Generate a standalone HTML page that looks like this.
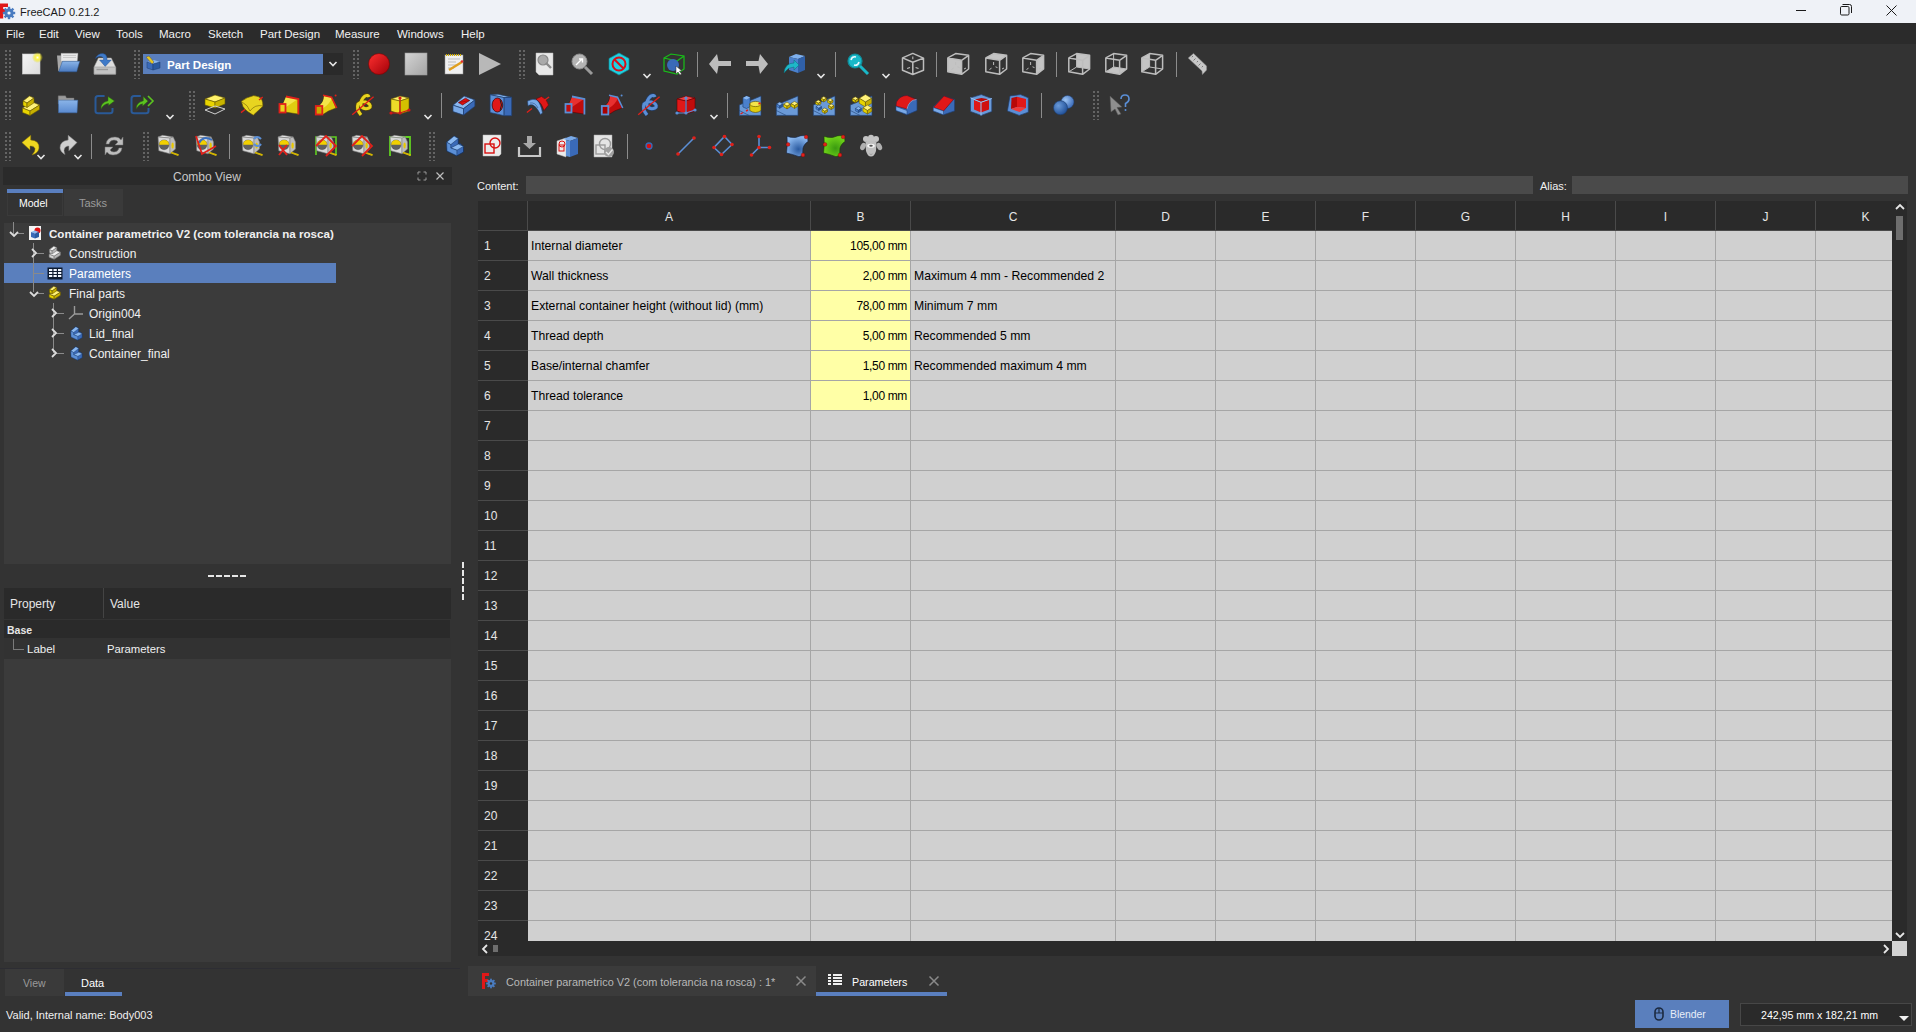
<!DOCTYPE html><html><head><meta charset="utf-8"><style>
html,body{margin:0;padding:0}
body{width:1916px;height:1032px;position:relative;overflow:hidden;background:#333333;font-family:"Liberation Sans", sans-serif}
div{position:absolute;box-sizing:border-box}
.t{white-space:nowrap;line-height:1}
svg{position:absolute;overflow:visible}
</style></head><body>
<div style="left:0px;top:0px;width:1916px;height:23px;background:#eff2f7;"></div>
<div class="t" style="left:20px;top:7px;font-size:11px;color:#1a1a1a;">FreeCAD 0.21.2</div>
<div style="left:0px;top:23px;width:1916px;height:21px;background:#2b2b2b;"></div>
<div class="t" style="left:6px;top:29px;font-size:11.5px;color:#f2f2f2;">File</div>
<div class="t" style="left:39px;top:29px;font-size:11.5px;color:#f2f2f2;">Edit</div>
<div class="t" style="left:75px;top:29px;font-size:11.5px;color:#f2f2f2;">View</div>
<div class="t" style="left:116px;top:29px;font-size:11.5px;color:#f2f2f2;">Tools</div>
<div class="t" style="left:159px;top:29px;font-size:11.5px;color:#f2f2f2;">Macro</div>
<div class="t" style="left:208px;top:29px;font-size:11.5px;color:#f2f2f2;">Sketch</div>
<div class="t" style="left:260px;top:29px;font-size:11.5px;color:#f2f2f2;">Part Design</div>
<div class="t" style="left:335px;top:29px;font-size:11.5px;color:#f2f2f2;">Measure</div>
<div class="t" style="left:397px;top:29px;font-size:11.5px;color:#f2f2f2;">Windows</div>
<div class="t" style="left:461px;top:29px;font-size:11.5px;color:#f2f2f2;">Help</div>
<div style="left:5px;top:50px;width:2px;height:2px;background:#646464;"></div>
<div style="left:9px;top:50px;width:2px;height:2px;background:#646464;"></div>
<div style="left:5px;top:54px;width:2px;height:2px;background:#646464;"></div>
<div style="left:9px;top:54px;width:2px;height:2px;background:#646464;"></div>
<div style="left:5px;top:58px;width:2px;height:2px;background:#646464;"></div>
<div style="left:9px;top:58px;width:2px;height:2px;background:#646464;"></div>
<div style="left:5px;top:62px;width:2px;height:2px;background:#646464;"></div>
<div style="left:9px;top:62px;width:2px;height:2px;background:#646464;"></div>
<div style="left:5px;top:66px;width:2px;height:2px;background:#646464;"></div>
<div style="left:9px;top:66px;width:2px;height:2px;background:#646464;"></div>
<div style="left:5px;top:70px;width:2px;height:2px;background:#646464;"></div>
<div style="left:9px;top:70px;width:2px;height:2px;background:#646464;"></div>
<div style="left:5px;top:74px;width:2px;height:2px;background:#646464;"></div>
<div style="left:9px;top:74px;width:2px;height:2px;background:#646464;"></div>
<div style="left:5px;top:78px;width:2px;height:1px;background:#646464;"></div>
<div style="left:9px;top:78px;width:2px;height:1px;background:#646464;"></div>
<div style="left:134px;top:50px;width:2px;height:2px;background:#646464;"></div>
<div style="left:138px;top:50px;width:2px;height:2px;background:#646464;"></div>
<div style="left:134px;top:54px;width:2px;height:2px;background:#646464;"></div>
<div style="left:138px;top:54px;width:2px;height:2px;background:#646464;"></div>
<div style="left:134px;top:58px;width:2px;height:2px;background:#646464;"></div>
<div style="left:138px;top:58px;width:2px;height:2px;background:#646464;"></div>
<div style="left:134px;top:62px;width:2px;height:2px;background:#646464;"></div>
<div style="left:138px;top:62px;width:2px;height:2px;background:#646464;"></div>
<div style="left:134px;top:66px;width:2px;height:2px;background:#646464;"></div>
<div style="left:138px;top:66px;width:2px;height:2px;background:#646464;"></div>
<div style="left:134px;top:70px;width:2px;height:2px;background:#646464;"></div>
<div style="left:138px;top:70px;width:2px;height:2px;background:#646464;"></div>
<div style="left:134px;top:74px;width:2px;height:2px;background:#646464;"></div>
<div style="left:138px;top:74px;width:2px;height:2px;background:#646464;"></div>
<div style="left:134px;top:78px;width:2px;height:1px;background:#646464;"></div>
<div style="left:138px;top:78px;width:2px;height:1px;background:#646464;"></div>
<div style="left:353px;top:50px;width:2px;height:2px;background:#646464;"></div>
<div style="left:357px;top:50px;width:2px;height:2px;background:#646464;"></div>
<div style="left:353px;top:54px;width:2px;height:2px;background:#646464;"></div>
<div style="left:357px;top:54px;width:2px;height:2px;background:#646464;"></div>
<div style="left:353px;top:58px;width:2px;height:2px;background:#646464;"></div>
<div style="left:357px;top:58px;width:2px;height:2px;background:#646464;"></div>
<div style="left:353px;top:62px;width:2px;height:2px;background:#646464;"></div>
<div style="left:357px;top:62px;width:2px;height:2px;background:#646464;"></div>
<div style="left:353px;top:66px;width:2px;height:2px;background:#646464;"></div>
<div style="left:357px;top:66px;width:2px;height:2px;background:#646464;"></div>
<div style="left:353px;top:70px;width:2px;height:2px;background:#646464;"></div>
<div style="left:357px;top:70px;width:2px;height:2px;background:#646464;"></div>
<div style="left:353px;top:74px;width:2px;height:2px;background:#646464;"></div>
<div style="left:357px;top:74px;width:2px;height:2px;background:#646464;"></div>
<div style="left:353px;top:78px;width:2px;height:1px;background:#646464;"></div>
<div style="left:357px;top:78px;width:2px;height:1px;background:#646464;"></div>
<div style="left:519px;top:50px;width:2px;height:2px;background:#646464;"></div>
<div style="left:523px;top:50px;width:2px;height:2px;background:#646464;"></div>
<div style="left:519px;top:54px;width:2px;height:2px;background:#646464;"></div>
<div style="left:523px;top:54px;width:2px;height:2px;background:#646464;"></div>
<div style="left:519px;top:58px;width:2px;height:2px;background:#646464;"></div>
<div style="left:523px;top:58px;width:2px;height:2px;background:#646464;"></div>
<div style="left:519px;top:62px;width:2px;height:2px;background:#646464;"></div>
<div style="left:523px;top:62px;width:2px;height:2px;background:#646464;"></div>
<div style="left:519px;top:66px;width:2px;height:2px;background:#646464;"></div>
<div style="left:523px;top:66px;width:2px;height:2px;background:#646464;"></div>
<div style="left:519px;top:70px;width:2px;height:2px;background:#646464;"></div>
<div style="left:523px;top:70px;width:2px;height:2px;background:#646464;"></div>
<div style="left:519px;top:74px;width:2px;height:2px;background:#646464;"></div>
<div style="left:523px;top:74px;width:2px;height:2px;background:#646464;"></div>
<div style="left:519px;top:78px;width:2px;height:1px;background:#646464;"></div>
<div style="left:523px;top:78px;width:2px;height:1px;background:#646464;"></div>
<div style="left:5px;top:91px;width:2px;height:2px;background:#646464;"></div>
<div style="left:9px;top:91px;width:2px;height:2px;background:#646464;"></div>
<div style="left:5px;top:95px;width:2px;height:2px;background:#646464;"></div>
<div style="left:9px;top:95px;width:2px;height:2px;background:#646464;"></div>
<div style="left:5px;top:99px;width:2px;height:2px;background:#646464;"></div>
<div style="left:9px;top:99px;width:2px;height:2px;background:#646464;"></div>
<div style="left:5px;top:103px;width:2px;height:2px;background:#646464;"></div>
<div style="left:9px;top:103px;width:2px;height:2px;background:#646464;"></div>
<div style="left:5px;top:107px;width:2px;height:2px;background:#646464;"></div>
<div style="left:9px;top:107px;width:2px;height:2px;background:#646464;"></div>
<div style="left:5px;top:111px;width:2px;height:2px;background:#646464;"></div>
<div style="left:9px;top:111px;width:2px;height:2px;background:#646464;"></div>
<div style="left:5px;top:115px;width:2px;height:2px;background:#646464;"></div>
<div style="left:9px;top:115px;width:2px;height:2px;background:#646464;"></div>
<div style="left:5px;top:119px;width:2px;height:1px;background:#646464;"></div>
<div style="left:9px;top:119px;width:2px;height:1px;background:#646464;"></div>
<div style="left:189px;top:91px;width:2px;height:2px;background:#646464;"></div>
<div style="left:193px;top:91px;width:2px;height:2px;background:#646464;"></div>
<div style="left:189px;top:95px;width:2px;height:2px;background:#646464;"></div>
<div style="left:193px;top:95px;width:2px;height:2px;background:#646464;"></div>
<div style="left:189px;top:99px;width:2px;height:2px;background:#646464;"></div>
<div style="left:193px;top:99px;width:2px;height:2px;background:#646464;"></div>
<div style="left:189px;top:103px;width:2px;height:2px;background:#646464;"></div>
<div style="left:193px;top:103px;width:2px;height:2px;background:#646464;"></div>
<div style="left:189px;top:107px;width:2px;height:2px;background:#646464;"></div>
<div style="left:193px;top:107px;width:2px;height:2px;background:#646464;"></div>
<div style="left:189px;top:111px;width:2px;height:2px;background:#646464;"></div>
<div style="left:193px;top:111px;width:2px;height:2px;background:#646464;"></div>
<div style="left:189px;top:115px;width:2px;height:2px;background:#646464;"></div>
<div style="left:193px;top:115px;width:2px;height:2px;background:#646464;"></div>
<div style="left:189px;top:119px;width:2px;height:1px;background:#646464;"></div>
<div style="left:193px;top:119px;width:2px;height:1px;background:#646464;"></div>
<div style="left:1093px;top:91px;width:2px;height:2px;background:#646464;"></div>
<div style="left:1097px;top:91px;width:2px;height:2px;background:#646464;"></div>
<div style="left:1093px;top:95px;width:2px;height:2px;background:#646464;"></div>
<div style="left:1097px;top:95px;width:2px;height:2px;background:#646464;"></div>
<div style="left:1093px;top:99px;width:2px;height:2px;background:#646464;"></div>
<div style="left:1097px;top:99px;width:2px;height:2px;background:#646464;"></div>
<div style="left:1093px;top:103px;width:2px;height:2px;background:#646464;"></div>
<div style="left:1097px;top:103px;width:2px;height:2px;background:#646464;"></div>
<div style="left:1093px;top:107px;width:2px;height:2px;background:#646464;"></div>
<div style="left:1097px;top:107px;width:2px;height:2px;background:#646464;"></div>
<div style="left:1093px;top:111px;width:2px;height:2px;background:#646464;"></div>
<div style="left:1097px;top:111px;width:2px;height:2px;background:#646464;"></div>
<div style="left:1093px;top:115px;width:2px;height:2px;background:#646464;"></div>
<div style="left:1097px;top:115px;width:2px;height:2px;background:#646464;"></div>
<div style="left:1093px;top:119px;width:2px;height:1px;background:#646464;"></div>
<div style="left:1097px;top:119px;width:2px;height:1px;background:#646464;"></div>
<div style="left:5px;top:132px;width:2px;height:2px;background:#646464;"></div>
<div style="left:9px;top:132px;width:2px;height:2px;background:#646464;"></div>
<div style="left:5px;top:136px;width:2px;height:2px;background:#646464;"></div>
<div style="left:9px;top:136px;width:2px;height:2px;background:#646464;"></div>
<div style="left:5px;top:140px;width:2px;height:2px;background:#646464;"></div>
<div style="left:9px;top:140px;width:2px;height:2px;background:#646464;"></div>
<div style="left:5px;top:144px;width:2px;height:2px;background:#646464;"></div>
<div style="left:9px;top:144px;width:2px;height:2px;background:#646464;"></div>
<div style="left:5px;top:148px;width:2px;height:2px;background:#646464;"></div>
<div style="left:9px;top:148px;width:2px;height:2px;background:#646464;"></div>
<div style="left:5px;top:152px;width:2px;height:2px;background:#646464;"></div>
<div style="left:9px;top:152px;width:2px;height:2px;background:#646464;"></div>
<div style="left:5px;top:156px;width:2px;height:2px;background:#646464;"></div>
<div style="left:9px;top:156px;width:2px;height:2px;background:#646464;"></div>
<div style="left:5px;top:160px;width:2px;height:1px;background:#646464;"></div>
<div style="left:9px;top:160px;width:2px;height:1px;background:#646464;"></div>
<div style="left:143px;top:132px;width:2px;height:2px;background:#646464;"></div>
<div style="left:147px;top:132px;width:2px;height:2px;background:#646464;"></div>
<div style="left:143px;top:136px;width:2px;height:2px;background:#646464;"></div>
<div style="left:147px;top:136px;width:2px;height:2px;background:#646464;"></div>
<div style="left:143px;top:140px;width:2px;height:2px;background:#646464;"></div>
<div style="left:147px;top:140px;width:2px;height:2px;background:#646464;"></div>
<div style="left:143px;top:144px;width:2px;height:2px;background:#646464;"></div>
<div style="left:147px;top:144px;width:2px;height:2px;background:#646464;"></div>
<div style="left:143px;top:148px;width:2px;height:2px;background:#646464;"></div>
<div style="left:147px;top:148px;width:2px;height:2px;background:#646464;"></div>
<div style="left:143px;top:152px;width:2px;height:2px;background:#646464;"></div>
<div style="left:147px;top:152px;width:2px;height:2px;background:#646464;"></div>
<div style="left:143px;top:156px;width:2px;height:2px;background:#646464;"></div>
<div style="left:147px;top:156px;width:2px;height:2px;background:#646464;"></div>
<div style="left:143px;top:160px;width:2px;height:1px;background:#646464;"></div>
<div style="left:147px;top:160px;width:2px;height:1px;background:#646464;"></div>
<div style="left:429px;top:132px;width:2px;height:2px;background:#646464;"></div>
<div style="left:433px;top:132px;width:2px;height:2px;background:#646464;"></div>
<div style="left:429px;top:136px;width:2px;height:2px;background:#646464;"></div>
<div style="left:433px;top:136px;width:2px;height:2px;background:#646464;"></div>
<div style="left:429px;top:140px;width:2px;height:2px;background:#646464;"></div>
<div style="left:433px;top:140px;width:2px;height:2px;background:#646464;"></div>
<div style="left:429px;top:144px;width:2px;height:2px;background:#646464;"></div>
<div style="left:433px;top:144px;width:2px;height:2px;background:#646464;"></div>
<div style="left:429px;top:148px;width:2px;height:2px;background:#646464;"></div>
<div style="left:433px;top:148px;width:2px;height:2px;background:#646464;"></div>
<div style="left:429px;top:152px;width:2px;height:2px;background:#646464;"></div>
<div style="left:433px;top:152px;width:2px;height:2px;background:#646464;"></div>
<div style="left:429px;top:156px;width:2px;height:2px;background:#646464;"></div>
<div style="left:433px;top:156px;width:2px;height:2px;background:#646464;"></div>
<div style="left:429px;top:160px;width:2px;height:1px;background:#646464;"></div>
<div style="left:433px;top:160px;width:2px;height:1px;background:#646464;"></div>
<div style="left:697px;top:52px;width:1px;height:25px;background:#8c8c8c;"></div>
<div style="left:835px;top:52px;width:1px;height:25px;background:#8c8c8c;"></div>
<div style="left:936px;top:52px;width:1px;height:25px;background:#8c8c8c;"></div>
<div style="left:1056px;top:52px;width:1px;height:25px;background:#8c8c8c;"></div>
<div style="left:1176px;top:52px;width:1px;height:25px;background:#8c8c8c;"></div>
<div style="left:441px;top:93px;width:1px;height:25px;background:#8c8c8c;"></div>
<div style="left:727px;top:93px;width:1px;height:25px;background:#8c8c8c;"></div>
<div style="left:884px;top:93px;width:1px;height:25px;background:#8c8c8c;"></div>
<div style="left:1041px;top:93px;width:1px;height:25px;background:#8c8c8c;"></div>
<div style="left:91px;top:134px;width:1px;height:25px;background:#8c8c8c;"></div>
<div style="left:229px;top:134px;width:1px;height:25px;background:#8c8c8c;"></div>
<svg style="left:642px;top:73px" width="10" height="6" viewBox="0 0 9 6"><path d="M1 1 L4.5 4.5 L8 1" fill="none" stroke="#e6e6e6" stroke-width="1.6"/></svg>
<svg style="left:816px;top:73px" width="10" height="6" viewBox="0 0 9 6"><path d="M1 1 L4.5 4.5 L8 1" fill="none" stroke="#e6e6e6" stroke-width="1.6"/></svg>
<svg style="left:881px;top:73px" width="10" height="6" viewBox="0 0 9 6"><path d="M1 1 L4.5 4.5 L8 1" fill="none" stroke="#e6e6e6" stroke-width="1.6"/></svg>
<svg style="left:165px;top:114px" width="10" height="6" viewBox="0 0 9 6"><path d="M1 1 L4.5 4.5 L8 1" fill="none" stroke="#e6e6e6" stroke-width="1.6"/></svg>
<svg style="left:423px;top:114px" width="10" height="6" viewBox="0 0 9 6"><path d="M1 1 L4.5 4.5 L8 1" fill="none" stroke="#e6e6e6" stroke-width="1.6"/></svg>
<svg style="left:709px;top:114px" width="10" height="6" viewBox="0 0 9 6"><path d="M1 1 L4.5 4.5 L8 1" fill="none" stroke="#e6e6e6" stroke-width="1.6"/></svg>
<svg style="left:36px;top:154px" width="10" height="6" viewBox="0 0 9 6"><path d="M1 1 L4.5 4.5 L8 1" fill="none" stroke="#e6e6e6" stroke-width="1.6"/></svg>
<svg style="left:73px;top:154px" width="10" height="6" viewBox="0 0 9 6"><path d="M1 1 L4.5 4.5 L8 1" fill="none" stroke="#e6e6e6" stroke-width="1.6"/></svg>
<svg style="left:22px;top:53px" width="22" height="22" viewBox="0 0 22 22"><defs><linearGradient id="ng" x1="0" y1="0" x2="1" y2="1"><stop offset="0" stop-color="#f4f4f4"/><stop offset="1" stop-color="#dcdcdc"/></linearGradient><radialGradient id="glw"><stop offset="0" stop-color="#ffffe8"/><stop offset=".35" stop-color="#fff44a"/><stop offset="1" stop-color="#e8e000" stop-opacity="0"/></radialGradient></defs><rect x="0.5" y="1" width="17.5" height="20" fill="url(#ng)" stroke="#cfcfcf" stroke-width=".6"/><circle cx="15.5" cy="4.5" r="5.5" fill="url(#glw)"/></svg>
<svg style="left:57px;top:53px" width="22" height="22" viewBox="0 0 22 22"><path d="M0 2.5 H5 V18 H1.3Z" fill="#a8a8a8"/><path d="M4 0.3 H21 L20.3 8.5 H4Z" fill="#e8e8e8" stroke="#9a9a9a" stroke-width=".4"/><path d="M6 2.5 H19 M6 4.5 H19" stroke="#c0c0c0" stroke-width=".8"/><defs><linearGradient id="og" x1="0" y1="0" x2="0" y2="1"><stop offset="0" stop-color="#8ab4e8"/><stop offset="1" stop-color="#4a7ac0"/></linearGradient></defs><path d="M5.4 8.3 H22.7 L19.7 18.8 H1.7Z" fill="url(#og)" stroke="#2d5a98" stroke-width=".5"/></svg>
<svg style="left:94px;top:53px" width="22" height="22" viewBox="0 0 22 22"><path d="M0 14 L4.4 4.9 H17.3 L21.7 14 V21.2 H0Z" fill="#dedede" stroke="#8a8a8a" stroke-width=".5"/><path d="M0 14 H21.7 V21.2 H0Z" fill="#c4c4c4" stroke="#8a8a8a" stroke-width=".5"/><path d="M2.5 16.5 H14" stroke="#9a9a9a" stroke-width="1.4"/><path d="M1.3 5.6 Q4 0.3 9 0.6 Q12.5 1 13 5 V7 H17.3 L11.2 13.4 L5.5 7 H9.5 V5.5 Q9 3 5 3.5 Q3 4 1.3 5.6Z" fill="#3f7ac8" stroke="#1f4a88" stroke-width=".4"/></svg>
<svg style="left:368px;top:53px" width="22" height="22" viewBox="0 0 22 22"><defs><linearGradient id="rg" x1="0" y1="0" x2="1" y2="1"><stop offset="0" stop-color="#ff3030"/><stop offset="1" stop-color="#a00008"/></linearGradient></defs><circle cx="11" cy="11" r="10.5" fill="url(#rg)" stroke="#7a0000" stroke-width=".6"/></svg>
<svg style="left:405px;top:53px" width="22" height="22" viewBox="0 0 22 22"><defs><linearGradient id="sg" x1="0" y1="0" x2="1" y2="1"><stop offset="0" stop-color="#d4d4d4"/><stop offset="1" stop-color="#a4a4a4"/></linearGradient></defs><rect x="0" y="0" width="22" height="22" fill="url(#sg)" stroke="#9a9a9a" stroke-width=".6"/></svg>
<svg style="left:443px;top:53px" width="22" height="22" viewBox="0 0 22 22"><rect x="2" y="2" width="18" height="19" fill="#f0f0f0" stroke="#999" stroke-width=".5"/><path d="M3 2 h16" stroke="#d4b000" stroke-width="2" stroke-dasharray="1 1"/><path d="M5 6 h12 M5 9 h8 M5 12 h8 M5 15 h6" stroke="#bbb" stroke-width="1"/><path d="M6 17 L19 9" stroke="#e0a020" stroke-width="2.4"/><circle cx="19" cy="8.5" r="1.3" fill="#e03030"/></svg>
<svg style="left:479px;top:53px" width="22" height="22" viewBox="0 0 22 22"><path d="M0 0 L22 11 L0 22Z" fill="#b8b8b8"/></svg>
<svg style="left:535px;top:53px" width="22" height="22" viewBox="0 0 22 22"><path d="M1 0 H18 V22 H4 L1 19Z" fill="#e8e8e8" stroke="#bbb" stroke-width=".5"/><circle cx="8" cy="7" r="5" fill="#aaa" stroke="#8a8a8a" stroke-width="1.2"/><path d="M11 10 L16 15" stroke="#8a8a8a" stroke-width="2.4"/></svg>
<svg style="left:571px;top:53px" width="22" height="22" viewBox="0 0 22 22"><circle cx="8.5" cy="8.5" r="7.5" fill="#b4b4b4" stroke="#8e8e8e" stroke-width="1"/><path d="M5 12 L11 6 M8 6 H11.5 V9.5" stroke="#fff" stroke-width="1.4" fill="none"/><path d="M14 14 L21 21" stroke="#9a9a9a" stroke-width="3"/></svg>
<svg style="left:608px;top:53px" width="22" height="22" viewBox="0 0 22 22"><path d="M11 0 L21 5.5 V16.5 L11 22 L1 16.5 V5.5Z" fill="#22d0e0" stroke="#0a8a9a" stroke-width=".7"/><circle cx="11" cy="11" r="6.5" fill="none" stroke="#d8101a" stroke-width="2"/><path d="M6.5 6.5 L15.5 15.5" stroke="#d8101a" stroke-width="2"/></svg>
<svg style="left:663px;top:53px" width="22" height="22" viewBox="0 0 22 22"><path d="M1 5 L8 1 L21 3 L21 16 L14 21 L1 18Z M1 5 L14 8 L21 3 M14 8 L14 21" fill="none" stroke="#18c018" stroke-width="1.2"/><circle cx="10" cy="12" r="6" fill="#3a6ab8"/><path d="M13 13 L13 21 L15 19 L17 22 L18.5 21 L16.5 18 L19 18Z" fill="#fff" stroke="#333" stroke-width=".5"/></svg>
<svg style="left:709px;top:53px" width="22" height="22" viewBox="0 0 22 22"><path d="M0 11 L8 1 L9.5 8 H22 V13 H9.5 L8 21Z" fill="#bdbdbd"/></svg>
<svg style="left:746px;top:53px" width="22" height="22" viewBox="0 0 22 22"><path d="M22 11 L14 1 L12.5 8 H0 V13 H12.5 L14 21Z" fill="#bdbdbd"/></svg>
<svg style="left:783px;top:53px" width="22" height="22" viewBox="0 0 22 22"><path d="M6 4 L13 1 L22 3 L15 6Z" fill="#7fb0ee"/><path d="M6 4 L15 6 V20 L6 17Z" fill="#4a80cc"/><path d="M15 6 L22 3 V17 L15 20Z" fill="#3060a8"/><path d="M1 20 Q2 10 11 10 V7 L16 12 L11 17 V14 Q5 14 1 20Z" fill="#1eb8c8" stroke="#0a6a78" stroke-width=".5"/></svg>
<svg style="left:847px;top:53px" width="22" height="22" viewBox="0 0 22 22"><circle cx="8" cy="8" r="7" fill="#19b8c8" stroke="#0e8b98" stroke-width="1.2"/><path d="M4 7 Q5 3 9 4 M12 9 Q11 13 7 12" stroke="#e8f8ff" stroke-width="1.6" fill="none"/><path d="M13 13 L21 21" stroke="#19b8c8" stroke-width="3"/></svg>
<svg style="left:902px;top:53px" width="22" height="22" viewBox="0 0 22 22"><path d="M10.8 0.4 L21.5 5.1 V17.2 L10.8 21.5 L0.5 17.2 V4.9Z M0.5 4.9 L10.8 9.3 L21.5 5.1 M10.8 9.3 V21.5" fill="none" stroke="#bdbdbd" stroke-width="1.5" stroke-linejoin="round"/><path d="M10.8 3.5 V6.3 M5.1 15.6 L8 14.4 M13.6 14.4 L16.5 15.6" stroke="#bdbdbd" stroke-width="1.1" fill="none"/></svg>
<svg style="left:947px;top:53px" width="22" height="22" viewBox="0 0 22 22"><path d="M0.8 4.9 L14.6 7.3 L14.6 21.3 L0.8 18.8Z" fill="#c4c4c4"/><path d="M0.8 4.9 L14.6 7.3 L14.6 21.3 L0.8 18.8Z M0.8 4.9 L8.6 0.6 L21.6 2.3 L14.6 7.3 M21.6 2.3 V16 L14.6 21.3" fill="none" stroke="#bdbdbd" stroke-width="1.5" stroke-linejoin="round"/><path d="M8.6 9 V12 M4.5 16.5 L6.5 15.2 M10.5 13.8 L12.5 14.6 M17 16 L19 15" stroke="#bdbdbd" stroke-width="1" fill="none"/></svg>
<svg style="left:985px;top:53px" width="22" height="22" viewBox="0 0 22 22"><path d="M0.8 4.9 L8.6 0.6 L21.6 2.3 L14.6 7.3Z" fill="#c4c4c4"/><path d="M0.8 4.9 L14.6 7.3 L14.6 21.3 L0.8 18.8Z M0.8 4.9 L8.6 0.6 L21.6 2.3 L14.6 7.3 M21.6 2.3 V16 L14.6 21.3" fill="none" stroke="#bdbdbd" stroke-width="1.5" stroke-linejoin="round"/><path d="M8.6 9 V12 M4.5 16.5 L6.5 15.2 M10.5 13.8 L12.5 14.6 M17 16 L19 15" stroke="#bdbdbd" stroke-width="1" fill="none"/></svg>
<svg style="left:1022px;top:53px" width="22" height="22" viewBox="0 0 22 22"><path d="M14.6 7.3 L21.6 2.3 L21.6 16 L14.6 21.3Z" fill="#c4c4c4"/><path d="M0.8 4.9 L14.6 7.3 L14.6 21.3 L0.8 18.8Z M0.8 4.9 L8.6 0.6 L21.6 2.3 L14.6 7.3 M21.6 2.3 V16 L14.6 21.3" fill="none" stroke="#bdbdbd" stroke-width="1.5" stroke-linejoin="round"/><path d="M8.6 9 V12 M4.5 16.5 L6.5 15.2 M10.5 13.8 L12.5 14.6 M17 16 L19 15" stroke="#bdbdbd" stroke-width="1" fill="none"/></svg>
<svg style="left:1068px;top:53px" width="22" height="22" viewBox="0 0 22 22"><path d="M8.6 0.6 L21.6 2.3 L21.6 16 L8.6 14Z" fill="#c4c4c4"/><path d="M0.8 4.9 L14.6 7.3 L14.6 21.3 L0.8 18.8Z M0.8 4.9 L8.6 0.6 L21.6 2.3 L14.6 7.3 M21.6 2.3 V16 L14.6 21.3" fill="none" stroke="#bdbdbd" stroke-width="1.5" stroke-linejoin="round"/><path d="M8.6 1 V14 L0.8 18.8 M8.6 14 L21.6 16" stroke="#bdbdbd" stroke-width="1" fill="none" stroke-dasharray="0"/></svg>
<svg style="left:1105px;top:53px" width="22" height="22" viewBox="0 0 22 22"><path d="M0.8 18.8 L8.6 14 L21.6 16 L14.6 21.3Z" fill="#c4c4c4"/><path d="M0.8 4.9 L14.6 7.3 L14.6 21.3 L0.8 18.8Z M0.8 4.9 L8.6 0.6 L21.6 2.3 L14.6 7.3 M21.6 2.3 V16 L14.6 21.3" fill="none" stroke="#bdbdbd" stroke-width="1.5" stroke-linejoin="round"/><path d="M8.6 1 V14 L0.8 18.8 M8.6 14 L21.6 16" stroke="#bdbdbd" stroke-width="1" fill="none" stroke-dasharray="0"/></svg>
<svg style="left:1141px;top:53px" width="22" height="22" viewBox="0 0 22 22"><path d="M0.8 4.9 L8.6 0.6 L8.6 14 L0.8 18.8Z" fill="#c4c4c4"/><path d="M0.8 4.9 L14.6 7.3 L14.6 21.3 L0.8 18.8Z M0.8 4.9 L8.6 0.6 L21.6 2.3 L14.6 7.3 M21.6 2.3 V16 L14.6 21.3" fill="none" stroke="#bdbdbd" stroke-width="1.5" stroke-linejoin="round"/><path d="M8.6 1 V14 L0.8 18.8 M8.6 14 L21.6 16" stroke="#bdbdbd" stroke-width="1" fill="none" stroke-dasharray="0"/></svg>
<svg style="left:1187px;top:53px" width="22" height="22" viewBox="0 0 22 22"><path d="M1.2 5.1 L6.5 0.4 L19.6 13 V17 L15.4 21.6 L15 18Z" fill="#c8c8c8" stroke="#8a8a8a" stroke-width=".5"/><path d="M6 3 l-1.2 1.2 M8.5 5.5 l-2 2 M11 8 l-1.2 1.2 M13.5 10.5 l-2 2 M16 13 l-1.2 1.2" stroke="#666" stroke-width=".8"/></svg>
<svg style="left:20px;top:94px" width="22" height="22" viewBox="0 0 22 22"><path d="M2.5 14 L12.5 8 L19.5 11 L10 17Z" fill="#fff27a" stroke="#6a5a00" stroke-width=".6"/><path d="M2.5 14 L10 17 V21.5 L2.5 18.5Z" fill="#e8d400" stroke="#6a5a00" stroke-width=".6"/><path d="M10 17 L19.5 11 V15.5 L10 21.5Z" fill="#c8b000" stroke="#6a5a00" stroke-width=".6"/><path d="M3 7 L9.5 2 L14 4 L7 9Z" fill="#fff27a" stroke="#6a5a00" stroke-width=".6"/><path d="M3 7 L7 9 V13.5 L3 11.5Z" fill="#e8d400" stroke="#6a5a00" stroke-width=".6"/><path d="M7 9 L14 4 V8.8 L7 13.5Z" fill="#c8b000" stroke="#6a5a00" stroke-width=".6"/></svg>
<svg style="left:57px;top:94px" width="22" height="22" viewBox="0 0 22 22"><path d="M1.2 1.8 H8.5 L9.5 4 H17 V10 H1.2Z" fill="#9a9a9a" stroke="#6a6a6a" stroke-width=".4"/><defs><linearGradient id="fg" x1="0" y1="0" x2="0" y2="1"><stop offset="0" stop-color="#8ab4e8"/><stop offset="1" stop-color="#5a8ad0"/></linearGradient></defs><path d="M1.5 6.2 H20.8 L20 18.8 H1.5Z" fill="url(#fg)" stroke="#3d6aa8" stroke-width=".5"/></svg>
<svg style="left:94px;top:94px" width="22" height="22" viewBox="0 0 22 22"><path d="M10.6 2 H4 Q1.5 2 1.5 4.5 V17 Q1.5 19.3 4 19.3 H16 Q18.5 19.3 18.5 17 V14" fill="none" stroke="#2a5a98" stroke-width="2"/><path d="M7.1 15 Q6 9 14 6.8 V2.5 L20.5 7 L14.5 11.5 V9.5 Q9.5 10 7.1 15Z" fill="#5cc420" stroke="#2a6010" stroke-width=".5"/></svg>
<svg style="left:131px;top:94px" width="22" height="22" viewBox="0 0 22 22"><path d="M9.8 2 H3 Q0.5 2 0.5 4.5 V17 Q0.5 19.3 3 19.3 H15 Q17.5 19.3 17.5 17 V14" fill="none" stroke="#2a5a98" stroke-width="2"/><path d="M5.4 15 Q4.5 9 12.3 6.8 V2.5 L17 7.2 L11.5 12 V9.8 Q7.5 10.5 5.4 15Z" fill="#5cc420" stroke="#2a6010" stroke-width=".5"/><path d="M17 2 L22 7 L17 12" fill="none" stroke="#5cc420" stroke-width="1.6"/></svg>
<svg style="left:204px;top:94px" width="22" height="22" viewBox="0 0 22 22"><path d="M1 5 L11 1 L21 4 L11 8Z" fill="#fff26a" stroke="#6a5a00" stroke-width=".6"/><path d="M1 5 L11 8 V14 L1 11Z" fill="#e8d400" stroke="#6a5a00" stroke-width=".6"/><path d="M11 8 L21 4 V10 L11 14Z" fill="#c8b400" stroke="#6a5a00" stroke-width=".6"/><path d="M1 16 L11 12 L21 15 L11 20Z" fill="none" stroke="#d0d0d0" stroke-width="1"/></svg>
<svg style="left:241px;top:94px" width="22" height="22" viewBox="0 0 22 22"><path d="M0.3 7.3 Q6 3 12.7 1.6 Q18 2 20.6 5 Q22 8 22 12.2 L12.3 21.2 L7 17.8 Q3 15 1.8 12.2 Z" fill="#e8d420" stroke="#5a4a00" stroke-width=".6"/><path d="M1 8 Q7 11 9 17 M9 17 Q14 10 22 12" fill="none" stroke="#5a4a00" stroke-width=".5"/><path d="M0 18.6 L4 15.5 M18 6 L21.7 3.1" stroke="#e0201a" stroke-width="1.4"/></svg>
<svg style="left:278px;top:94px" width="22" height="22" viewBox="0 0 22 22"><path d="M5 10 L8 3 L20 5 L20 20 L7 18Z" fill="#e0cc10" stroke="#5a4a00" stroke-width=".5"/><path d="M5 10 L8 3 L20 5 L8 13Z" fill="#f4e44a"/><rect x="1.5" y="10" width="6" height="8.5" fill="#e8d420" stroke="#e0201a" stroke-width="1.8"/><path d="M8 2.5 L20.4 5 V20.5" fill="none" stroke="#e0201a" stroke-width="1.8"/></svg>
<svg style="left:315px;top:94px" width="22" height="22" viewBox="0 0 22 22"><path d="M4 12 Q9 8 9 2 L17 3.5 L21 14 Q14 16 7 21Z" fill="#e0cc10" stroke="#5a4a00" stroke-width=".5"/><path d="M4 12 Q9 8 9 2 L17 3.5 Q15 10 7 15Z" fill="#f4e44a"/><rect x="0.8" y="12" width="6.5" height="8.5" fill="#c8a800" stroke="#e0201a" stroke-width="1.8"/><path d="M8 1.3 L16.5 3.1 L21.7 14" fill="none" stroke="#e0201a" stroke-width="1.6"/><circle cx="20.6" cy="1.6" r="1" fill="#e0201a"/></svg>
<svg style="left:352px;top:94px" width="22" height="22" viewBox="0 0 22 22"><path d="M9 21 Q4 15 6 10 Q10 6 16 9 Q20 12 17 14 Q12 16 9 12 Q8 6 13 2 Q16 0.5 17 3" fill="none" stroke="#5a4a00" stroke-width="4.2"/><path d="M9 21 Q4 15 6 10 Q10 6 16 9 Q20 12 17 14 Q12 16 9 12 Q8 6 13 2 Q16 0.5 17 3" fill="none" stroke="#e8d420" stroke-width="3"/><path d="M0.2 20.8 L21.6 2.8" stroke="#e0201a" stroke-width="1.4"/></svg>
<svg style="left:389px;top:94px" width="22" height="22" viewBox="0 0 22 22"><path d="M2 5 L11 2 L20 4 L11 7Z" fill="#fff26a" stroke="#6a5a00" stroke-width=".6"/><path d="M2 5 L11 7 V20 L2 17Z" fill="#eedc28" stroke="#6a5a00" stroke-width=".6"/><path d="M11 7 L20 4 V17 L11 20Z" fill="#d4c000" stroke="#6a5a00" stroke-width=".6"/><path d="M11 4 V19 M2 19 L11 19 L20 16" stroke="#d01818" stroke-width="1.2" fill="none"/><circle cx="11" cy="4" r="1.6" fill="#d01818"/><circle cx="2" cy="19" r="1.6" fill="#d01818"/><circle cx="11" cy="19" r="1.6" fill="#d01818"/><circle cx="20" cy="16" r="1.6" fill="#d01818"/></svg>
<svg style="left:452px;top:94px" width="22" height="22" viewBox="0 0 22 22"><path d="M1 11.2 L12.1 2.1 L22.9 5.9 L11.5 14.7Z" fill="#8ab8f0" stroke="#1f3f70" stroke-width=".7"/><path d="M1 11.2 L11.5 14.7 V21.1 L1 17.6Z" fill="#7aaae8" stroke="#1f3f70" stroke-width=".7"/><path d="M11.5 14.7 L22.9 5.9 V12.3 L11.5 21.1Z" fill="#3a6ab8" stroke="#1f3f70" stroke-width=".7"/><path d="M6.5 8.6 L13.5 4.2 L17.6 6.5 L10.6 10.9Z" fill="#e01010" stroke="#500" stroke-width=".6"/><path d="M6.5 8.6 L17.6 6.5" stroke="#800" stroke-width=".5"/></svg>
<svg style="left:490px;top:94px" width="22" height="22" viewBox="0 0 22 22"><path d="M0.1 0.7 L8 0.2 L21.7 3.3 L14.1 3.6Z" fill="#8ab8f0" stroke="#1f3f70" stroke-width=".6"/><path d="M0.1 0.7 L14.1 3.6 V21.7 L0.1 18.5Z" fill="#5b8fd6" stroke="#1f3f70" stroke-width=".7"/><path d="M14.1 3.6 L21.7 3.3 V21.7 H14.1Z" fill="#3a6ab8" stroke="#1f3f70" stroke-width=".7"/><ellipse cx="7.4" cy="11" rx="5.3" ry="7" fill="#e01818" stroke="#300" stroke-width=".7"/><path d="M10 5.5 Q13 11 10 16.5" fill="none" stroke="#222" stroke-width="1"/></svg>
<svg style="left:527px;top:94px" width="22" height="22" viewBox="0 0 22 22"><path d="M0.5 7.1 Q6 4 10 6 Q14 10 15.5 19 L13.5 20.5 Q10 13 6 11 Q3 10 1 12Z" fill="#7aaae8" stroke="#1f3f70" stroke-width=".6"/><path d="M3 9 Q8 8 11 14" fill="none" stroke="#1f3f70" stroke-width=".5"/><path d="M9 5 L14.5 2.5 Q20 5 21.5 11 L17 16.5 Q15 9 9 5Z" fill="#e01818" stroke="#600" stroke-width=".5"/><path d="M-0.1 18.5 L5 14.5 M17 6.5 L22.1 3" stroke="#e0201a" stroke-width="1.4"/></svg>
<svg style="left:564px;top:94px" width="22" height="22" viewBox="0 0 22 22"><path d="M5 10 L8 3 L20 5 L20 20 L7 18Z" fill="#c00c0c" stroke="#500" stroke-width=".5"/><path d="M5 10 L8 3 L20 5 L8 13Z" fill="#e83030"/><rect x="1.5" y="10" width="6" height="8.5" fill="#c00c0c" stroke="#5b8fd6" stroke-width="1.8"/><path d="M8 2.5 L20.4 5 V20.5" fill="none" stroke="#5b8fd6" stroke-width="1.8"/></svg>
<svg style="left:601px;top:94px" width="22" height="22" viewBox="0 0 22 22"><path d="M4 12 Q9 8 9 2 L17 3.5 L21 14 Q14 16 7 21Z" fill="#c00c0c" stroke="#500" stroke-width=".5"/><path d="M4 12 Q9 8 9 2 L17 3.5 Q15 10 7 15Z" fill="#e83030"/><rect x="0.8" y="12" width="6.5" height="8.5" fill="#a00" stroke="#5b8fd6" stroke-width="1.8"/><path d="M8 1.3 L16.5 3.1 L21.7 14" fill="none" stroke="#5b8fd6" stroke-width="1.6"/><circle cx="20.6" cy="1.6" r="1" fill="#5b8fd6"/></svg>
<svg style="left:638px;top:94px" width="22" height="22" viewBox="0 0 22 22"><path d="M9 21 Q4 15 6 10 Q10 6 16 9 Q20 12 17 14 Q12 16 9 12 Q8 6 13 2 Q16 0.5 17 3" fill="none" stroke="#1f3f70" stroke-width="4.2"/><path d="M9 21 Q4 15 6 10 Q10 6 16 9 Q20 12 17 14 Q12 16 9 12 Q8 6 13 2 Q16 0.5 17 3" fill="none" stroke="#5b8fd6" stroke-width="3"/><path d="M0.2 20.8 L21.6 2.8" stroke="#e0201a" stroke-width="1.4"/></svg>
<svg style="left:675px;top:94px" width="22" height="22" viewBox="0 0 22 22"><path d="M2 5 L11 2 L20 4 L11 7Z" fill="#f04040" stroke="#600" stroke-width=".6"/><path d="M2 5 L11 7 V20 L2 17Z" fill="#e01818" stroke="#600" stroke-width=".6"/><path d="M11 7 L20 4 V17 L11 20Z" fill="#c00c0c" stroke="#600" stroke-width=".6"/><path d="M11 4 V19 M2 19 L11 19 L20 16" stroke="#5b8fd6" stroke-width="1.2" fill="none"/><circle cx="11" cy="4" r="1.6" fill="#5b8fd6"/><circle cx="2" cy="19" r="1.6" fill="#5b8fd6"/><circle cx="11" cy="19" r="1.6" fill="#5b8fd6"/><circle cx="20" cy="16" r="1.6" fill="#5b8fd6"/></svg>
<svg style="left:739px;top:94px" width="22" height="22" viewBox="0 0 22 22"><path d="M0.3 11 L22 2 V21.4 H0.3Z" fill="#6a9ad8" stroke="#1f3f70" stroke-width=".7"/><path d="M0.3 16.5 L10 21.4" stroke="#1f3f70" stroke-width=".6"/><path d="M3.9 4 L7.5 2 L11.1 3.5 V12.5 L7.5 14.5 L3.9 13Z" fill="#4a80cc" stroke="#1f3f70" stroke-width=".6"/><path d="M3.9 4 L7.5 2 L11.1 3.5 L7.5 5.5Z" fill="#8ab8f0"/><path d="M10.8 10 V16.5 Q16.5 20.5 22 16.5 V10Z" fill="#e0cc10" stroke="#5a4a00" stroke-width=".6"/><ellipse cx="16.4" cy="10" rx="5.6" ry="2.6" fill="#f4e44a" stroke="#5a4a00" stroke-width=".6"/><path d="M1.5 20 L4 18.5 M7 17 L9 16 M19.5 10 L21.5 9" stroke="#e0201a" stroke-width="1.4"/></svg>
<svg style="left:776px;top:94px" width="22" height="22" viewBox="0 0 22 22"><path d="M0.3 11 L22 2 V21.4 H0.3Z" fill="#6a9ad8" stroke="#1f3f70" stroke-width=".7"/><path d="M0.3 16.5 L10 21.4" stroke="#1f3f70" stroke-width=".6"/><path d="M0.6 9.959999999999999 L3.7 8.1 L6.8 9.959999999999999 L3.7 11.82Z" fill="#8ab8f0" stroke="#1f3f70" stroke-width=".5"/><path d="M0.6 9.959999999999999 L3.7 11.82 V14.3 L0.6 12.440000000000001Z" fill="#4a80cc" stroke="#1f3f70" stroke-width=".5"/><path d="M3.7 11.82 L6.8 9.959999999999999 V12.440000000000001 L3.7 14.3Z" fill="#2a5aa0" stroke="#1f3f70" stroke-width=".5"/><path d="M7.6 10.14 L11.0 8.1 L14.399999999999999 10.14 L11.0 12.18Z" fill="#fff27a" stroke="#5a4a00" stroke-width=".5"/><path d="M7.6 10.14 L11.0 12.18 V14.899999999999999 L7.6 12.86Z" fill="#e8d400" stroke="#5a4a00" stroke-width=".5"/><path d="M11.0 12.18 L14.399999999999999 10.14 V12.86 L11.0 14.899999999999999Z" fill="#c8b000" stroke="#5a4a00" stroke-width=".5"/><path d="M15 9.5 L18.5 7.4 L22 9.5 L18.5 11.600000000000001Z" fill="#fff27a" stroke="#5a4a00" stroke-width=".5"/><path d="M15 9.5 L18.5 11.600000000000001 V14.4 L15 12.3Z" fill="#e8d400" stroke="#5a4a00" stroke-width=".5"/><path d="M18.5 11.600000000000001 L22 9.5 V12.3 L18.5 14.4Z" fill="#c8b000" stroke="#5a4a00" stroke-width=".5"/></svg>
<svg style="left:813px;top:94px" width="22" height="22" viewBox="0 0 22 22"><path d="M0.3 11 L22 2 V21.4 H0.3Z" fill="#6a9ad8" stroke="#1f3f70" stroke-width=".7"/><path d="M0.3 16.5 L10 21.4" stroke="#1f3f70" stroke-width=".6"/><path d="M2.5 7.65 L5.25 6 L8.0 7.65 L5.25 9.3Z" fill="#fff27a" stroke="#5a4a00" stroke-width=".5"/><path d="M2.5 7.65 L5.25 9.3 V11.5 L2.5 9.85Z" fill="#e8d400" stroke="#5a4a00" stroke-width=".5"/><path d="M5.25 9.3 L8.0 7.65 V9.85 L5.25 11.5Z" fill="#c8b000" stroke="#5a4a00" stroke-width=".5"/><path d="M8 4.15 L10.75 2.5 L13.5 4.15 L10.75 5.8Z" fill="#fff27a" stroke="#5a4a00" stroke-width=".5"/><path d="M8 4.15 L10.75 5.8 V8.0 L8 6.35Z" fill="#e8d400" stroke="#5a4a00" stroke-width=".5"/><path d="M10.75 5.8 L13.5 4.15 V6.35 L10.75 8.0Z" fill="#c8b000" stroke="#5a4a00" stroke-width=".5"/><path d="M14.5 6.15 L17.25 4.5 L20.0 6.15 L17.25 7.8Z" fill="#fff27a" stroke="#5a4a00" stroke-width=".5"/><path d="M14.5 6.15 L17.25 7.8 V10.0 L14.5 8.35Z" fill="#e8d400" stroke="#5a4a00" stroke-width=".5"/><path d="M17.25 7.8 L20.0 6.15 V8.35 L17.25 10.0Z" fill="#c8b000" stroke="#5a4a00" stroke-width=".5"/><path d="M15.5 11.65 L18.25 10 L21.0 11.65 L18.25 13.3Z" fill="#fff27a" stroke="#5a4a00" stroke-width=".5"/><path d="M15.5 11.65 L18.25 13.3 V15.5 L15.5 13.85Z" fill="#e8d400" stroke="#5a4a00" stroke-width=".5"/><path d="M18.25 13.3 L21.0 11.65 V13.85 L18.25 15.5Z" fill="#c8b000" stroke="#5a4a00" stroke-width=".5"/><path d="M9 15.65 L11.75 14 L14.5 15.65 L11.75 17.3Z" fill="#fff27a" stroke="#5a4a00" stroke-width=".5"/><path d="M9 15.65 L11.75 17.3 V19.5 L9 17.85Z" fill="#e8d400" stroke="#5a4a00" stroke-width=".5"/><path d="M11.75 17.3 L14.5 15.65 V17.85 L11.75 19.5Z" fill="#c8b000" stroke="#5a4a00" stroke-width=".5"/><path d="M3 12.65 L5.75 11 L8.5 12.65 L5.75 14.3Z" fill="#8ab8f0" stroke="#1f3f70" stroke-width=".5"/><path d="M3 12.65 L5.75 14.3 V16.5 L3 14.85Z" fill="#4a80cc" stroke="#1f3f70" stroke-width=".5"/><path d="M5.75 14.3 L8.5 12.65 V14.85 L5.75 16.5Z" fill="#2a5aa0" stroke="#1f3f70" stroke-width=".5"/></svg>
<svg style="left:850px;top:94px" width="22" height="22" viewBox="0 0 22 22"><path d="M0.3 11 L22 2 V21.4 H0.3Z" fill="#6a9ad8" stroke="#1f3f70" stroke-width=".7"/><path d="M0.3 16.5 L10 21.4" stroke="#1f3f70" stroke-width=".6"/><path d="M2.3 4.6 L5.3 2.8 L8.3 4.6 L5.3 6.3999999999999995Z" fill="#fff27a" stroke="#5a4a00" stroke-width=".5"/><path d="M2.3 4.6 L5.3 6.3999999999999995 V8.8 L2.3 7.000000000000001Z" fill="#e8d400" stroke="#5a4a00" stroke-width=".5"/><path d="M5.3 6.3999999999999995 L8.3 4.6 V7.000000000000001 L5.3 8.8Z" fill="#c8b000" stroke="#5a4a00" stroke-width=".5"/><path d="M9.2 4.25 L15.45 0.5 L21.7 4.25 L15.45 8.0Z" fill="#fff27a" stroke="#5a4a00" stroke-width=".5"/><path d="M9.2 4.25 L15.45 8.0 V13.0 L9.2 9.25Z" fill="#e8d400" stroke="#5a4a00" stroke-width=".5"/><path d="M15.45 8.0 L21.7 4.25 V9.25 L15.45 13.0Z" fill="#c8b000" stroke="#5a4a00" stroke-width=".5"/><path d="M5.4 14.399999999999999 L8.4 12.6 L11.4 14.399999999999999 L8.4 16.2Z" fill="#8ab8f0" stroke="#1f3f70" stroke-width=".5"/><path d="M5.4 14.399999999999999 L8.4 16.2 V18.6 L5.4 16.8Z" fill="#4a80cc" stroke="#1f3f70" stroke-width=".5"/><path d="M8.4 16.2 L11.4 14.399999999999999 V16.8 L8.4 18.6Z" fill="#2a5aa0" stroke="#1f3f70" stroke-width=".5"/><path d="M12.9 13.799999999999999 L17.4 11.1 L21.9 13.799999999999999 L17.4 16.5Z" fill="#fff27a" stroke="#5a4a00" stroke-width=".5"/><path d="M12.9 13.799999999999999 L17.4 16.5 V20.1 L12.9 17.400000000000002Z" fill="#e8d400" stroke="#5a4a00" stroke-width=".5"/><path d="M17.4 16.5 L21.9 13.799999999999999 V17.400000000000002 L17.4 20.1Z" fill="#c8b000" stroke="#5a4a00" stroke-width=".5"/></svg>
<svg style="left:895px;top:94px" width="22" height="22" viewBox="0 0 22 22"><path d="M1 12 L1 16.5 L12 20.8 L22 16.5 L22 6 L12 1.5 Q5 1.5 1.5 8Z" fill="#3a6ab8" stroke="#1f3f70" stroke-width=".7"/><path d="M1.5 8 Q5 1.5 12 1.5 L21.5 5.5 Q14 6 12 15 L1 12Z" fill="#e01818" stroke="#600" stroke-width=".5"/><path d="M12 15 Q14 6 21.5 5.5" fill="none" stroke="#8ab8f0" stroke-width=".8"/><path d="M1 12.5 L12 16.5 L12 20.5 L1 16.5Z" fill="#7aaae8" stroke="#1f3f70" stroke-width=".5"/></svg>
<svg style="left:933px;top:94px" width="22" height="22" viewBox="0 0 22 22"><path d="M0.3 13 L0.3 16.9 L10.5 20.8 L21.6 16.9 L21.6 5.5 L11 1.9Z" fill="#3a6ab8" stroke="#1f3f70" stroke-width=".7"/><path d="M0.5 13.5 L11 2 L20.5 5.5 L10.5 17Z" fill="#e01818" stroke="#600" stroke-width=".5"/><path d="M0.3 13.5 L10.5 17 L10.5 20.8 L0.3 16.9Z" fill="#7aaae8" stroke="#1f3f70" stroke-width=".5"/></svg>
<svg style="left:970px;top:94px" width="22" height="22" viewBox="0 0 22 22"><path d="M11.3 0.6 L21.8 4.5 V17.5 L11.3 21.4 L0.5 17.5 V3.8Z" fill="#6a9ad8" stroke="#1f3f70" stroke-width=".7"/><path d="M4 6 L11 8.5 V18.5 L4 15.5Z" fill="#e01818"/><path d="M11 8.5 L19 5.5 V15.5 L11 18.5Z" fill="#d01010"/><path d="M4.5 5.5 L11.5 4 L18.5 5.3 L11 8Z" fill="#b80808"/><path d="M0.5 3.8 L11 8.3 L21.8 4.5 M11 8.3 V21.4" fill="none" stroke="#9ac4f4" stroke-width="1"/></svg>
<svg style="left:1007px;top:94px" width="22" height="22" viewBox="0 0 22 22"><path d="M3 1.9 L13.5 0.6 L21.3 3.8 V18.2 L12.2 21.4 L0.4 16.9Z" fill="#5b8fd6" stroke="#1f3f70" stroke-width=".7"/><path d="M4.5 4 L10 2.8 V13 L4 15Z" fill="#b80808"/><path d="M10 2.8 L19 5 V14 L10 13Z" fill="#e01818"/><path d="M4 15 L10 13 L19 14 L12.5 18Z" fill="#f03a3a"/></svg>
<svg style="left:1053px;top:94px" width="22" height="22" viewBox="0 0 22 22"><defs><radialGradient id="bg1" cx=".35" cy=".35" r=".7"><stop offset="0" stop-color="#9cc4f4"/><stop offset="1" stop-color="#3a6ab8"/></radialGradient><radialGradient id="bg2" cx=".35" cy=".35" r=".7"><stop offset="0" stop-color="#6a9ad8"/><stop offset="1" stop-color="#1f4f98"/></radialGradient></defs><circle cx="14.5" cy="8" r="6.5" fill="url(#bg1)" stroke="#1f3f70" stroke-width=".5"/><circle cx="7.5" cy="13.8" r="7" fill="url(#bg2)" stroke="#1f3f70" stroke-width=".6"/></svg>
<svg style="left:1108px;top:94px" width="22" height="22" viewBox="0 0 22 22"><path d="M2 2 L14 13 L9 13.5 L13 20 L10 21 L7 15 L3 18Z" fill="#8e8e8e" stroke="#555" stroke-width=".5"/><path d="M13 5 Q13 1 17 1 Q21 1 21 5 Q21 8 17.5 9.5 V13" fill="none" stroke="#5b8fd6" stroke-width="1.6"/><circle cx="17.5" cy="16" r="1" fill="#5b8fd6"/></svg>
<svg style="left:21px;top:135px" width="22" height="22" viewBox="0 0 22 22"><path d="M0.9 7.5 L9.7 0.3 V5 Q18.5 5.5 18 13 Q17.5 18 11 20 Q14.5 16 14 13.5 Q13 10.5 9 11 V15Z" fill="#f0d820" stroke="#8a7400" stroke-width=".5"/></svg>
<svg style="left:58px;top:135px" width="22" height="22" viewBox="0 0 22 22"><path d="M19 7.5 L10.2 0.3 V5 Q2 6 2 13 Q2.5 17 7 19.5 Q5 15 7 12.5 Q9 10.5 10.9 11 V15.7Z" fill="#d0d0d0" stroke="#8a8a8a" stroke-width=".5"/></svg>
<svg style="left:103px;top:135px" width="22" height="22" viewBox="0 0 22 22"><path d="M3 9 Q4 2 12 2 Q16 2 18 5 L20 2 V10 H12 L15 7 Q14 5 11 5 Q7 5 6 9Z" fill="#bdbdbd" stroke="#777" stroke-width=".5"/><path d="M19 13 Q18 20 10 20 Q6 20 4 17 L2 20 V12 H10 L7 15 Q8 17 11 17 Q15 17 16 13Z" fill="#bdbdbd" stroke="#777" stroke-width=".5"/></svg>
<svg style="left:157px;top:135px" width="22" height="22" viewBox="0 0 22 22"><path d="M1.1 1.9 L5.5 0.3 L16.2 1.9 L13 3.1Z" fill="#e8e8e8" stroke="#7a7a7a" stroke-width=".5"/><path d="M1.1 1.9 L13 3.1 L13 18.8 L1.8 15.7Z" fill="#d8d8d8" stroke="#7a7a7a" stroke-width=".6"/><path d="M13 3.1 L16.2 1.9 L18.5 7 V14 L13 18.8Z" fill="#bcbcbc" stroke="#7a7a7a" stroke-width=".5"/><circle cx="7.1" cy="9.8" r="4.9" fill="#606060" stroke="#444" stroke-width=".4"/><path d="M2.2 9.8 A4.9 4.9 0 0 1 12 9.8Z" fill="#f2d000"/><ellipse cx="15.6" cy="10.4" rx="1.2" ry="3" fill="#e8c800"/><path d="M14 17.5 L21.5 20.2" stroke="#e8c800" stroke-width="1.8"/><path d="M14 17.5 L21.5 20.2" stroke="#8a7400" stroke-width=".3"/></svg>
<svg style="left:195px;top:135px" width="22" height="22" viewBox="0 0 22 22"><path d="M1.1 1.9 L5.5 0.3 L16.2 1.9 L13 3.1Z" fill="#e8e8e8" stroke="#7a7a7a" stroke-width=".5"/><path d="M1.1 1.9 L13 3.1 L13 18.8 L1.8 15.7Z" fill="#d8d8d8" stroke="#7a7a7a" stroke-width=".6"/><path d="M13 3.1 L16.2 1.9 L18.5 7 V14 L13 18.8Z" fill="#bcbcbc" stroke="#7a7a7a" stroke-width=".5"/><circle cx="7.1" cy="9.8" r="4.9" fill="#606060" stroke="#444" stroke-width=".4"/><path d="M2.2 9.8 A4.9 4.9 0 0 1 12 9.8Z" fill="#f2d000"/><ellipse cx="15.6" cy="10.4" rx="1.2" ry="3" fill="#e8c800"/><path d="M14 17.5 L21.5 20.2" stroke="#e8c800" stroke-width="1.8"/><path d="M14 17.5 L21.5 20.2" stroke="#8a7400" stroke-width=".3"/><path d="M4 8 Q8 0 17 5" fill="none" stroke="#3a70c0" stroke-width="2"/><path d="M1 1 L7 19 L21 11" fill="none" stroke="#e0201a" stroke-width="1.8"/></svg>
<svg style="left:241px;top:135px" width="22" height="22" viewBox="0 0 22 22"><path d="M1.1 1.9 L5.5 0.3 L16.2 1.9 L13 3.1Z" fill="#e8e8e8" stroke="#7a7a7a" stroke-width=".5"/><path d="M1.1 1.9 L13 3.1 L13 18.8 L1.8 15.7Z" fill="#d8d8d8" stroke="#7a7a7a" stroke-width=".6"/><path d="M13 3.1 L16.2 1.9 L18.5 7 V14 L13 18.8Z" fill="#bcbcbc" stroke="#7a7a7a" stroke-width=".5"/><circle cx="7.1" cy="9.8" r="4.9" fill="#606060" stroke="#444" stroke-width=".4"/><path d="M2.2 9.8 A4.9 4.9 0 0 1 12 9.8Z" fill="#f2d000"/><ellipse cx="15.6" cy="10.4" rx="1.2" ry="3" fill="#e8c800"/><path d="M14 17.5 L21.5 20.2" stroke="#e8c800" stroke-width="1.8"/><path d="M14 17.5 L21.5 20.2" stroke="#8a7400" stroke-width=".3"/><path d="M13 4 Q16 0 20 4 M20 9 Q17 13 13 9" fill="none" stroke="#5b8fd6" stroke-width="2.2"/></svg>
<svg style="left:277px;top:135px" width="22" height="22" viewBox="0 0 22 22"><path d="M1.1 1.9 L5.5 0.3 L16.2 1.9 L13 3.1Z" fill="#e8e8e8" stroke="#7a7a7a" stroke-width=".5"/><path d="M1.1 1.9 L13 3.1 L13 18.8 L1.8 15.7Z" fill="#d8d8d8" stroke="#7a7a7a" stroke-width=".6"/><path d="M13 3.1 L16.2 1.9 L18.5 7 V14 L13 18.8Z" fill="#bcbcbc" stroke="#7a7a7a" stroke-width=".5"/><circle cx="7.1" cy="9.8" r="4.9" fill="#606060" stroke="#444" stroke-width=".4"/><path d="M2.2 9.8 A4.9 4.9 0 0 1 12 9.8Z" fill="#f2d000"/><ellipse cx="15.6" cy="10.4" rx="1.2" ry="3" fill="#e8c800"/><path d="M14 17.5 L21.5 20.2" stroke="#e8c800" stroke-width="1.8"/><path d="M14 17.5 L21.5 20.2" stroke="#8a7400" stroke-width=".3"/><path d="M2 10 L10 20 M10 10 L2 20" stroke="#e0201a" stroke-width="2"/></svg>
<svg style="left:315px;top:135px" width="22" height="22" viewBox="0 0 22 22"><path d="M1 20 V2 H21 V20" fill="none" stroke="#60d020" stroke-width="1.6"/><path d="M1.1 1.9 L5.5 0.3 L16.2 1.9 L13 3.1Z" fill="#e8e8e8" stroke="#7a7a7a" stroke-width=".5"/><path d="M1.1 1.9 L13 3.1 L13 18.8 L1.8 15.7Z" fill="#d8d8d8" stroke="#7a7a7a" stroke-width=".6"/><path d="M13 3.1 L16.2 1.9 L18.5 7 V14 L13 18.8Z" fill="#bcbcbc" stroke="#7a7a7a" stroke-width=".5"/><circle cx="7.1" cy="9.8" r="4.9" fill="#606060" stroke="#444" stroke-width=".4"/><path d="M2.2 9.8 A4.9 4.9 0 0 1 12 9.8Z" fill="#f2d000"/><ellipse cx="15.6" cy="10.4" rx="1.2" ry="3" fill="#e8c800"/><path d="M14 17.5 L21.5 20.2" stroke="#e8c800" stroke-width="1.8"/><path d="M14 17.5 L21.5 20.2" stroke="#8a7400" stroke-width=".3"/><path d="M1 11 L11 1 L21 11 L11 21" fill="none" stroke="#e0201a" stroke-width="1.8"/></svg>
<svg style="left:351px;top:135px" width="22" height="22" viewBox="0 0 22 22"><path d="M1.1 1.9 L5.5 0.3 L16.2 1.9 L13 3.1Z" fill="#e8e8e8" stroke="#7a7a7a" stroke-width=".5"/><path d="M1.1 1.9 L13 3.1 L13 18.8 L1.8 15.7Z" fill="#d8d8d8" stroke="#7a7a7a" stroke-width=".6"/><path d="M13 3.1 L16.2 1.9 L18.5 7 V14 L13 18.8Z" fill="#bcbcbc" stroke="#7a7a7a" stroke-width=".5"/><circle cx="7.1" cy="9.8" r="4.9" fill="#606060" stroke="#444" stroke-width=".4"/><path d="M2.2 9.8 A4.9 4.9 0 0 1 12 9.8Z" fill="#f2d000"/><ellipse cx="15.6" cy="10.4" rx="1.2" ry="3" fill="#e8c800"/><path d="M14 17.5 L21.5 20.2" stroke="#e8c800" stroke-width="1.8"/><path d="M14 17.5 L21.5 20.2" stroke="#8a7400" stroke-width=".3"/><path d="M1 11 L11 1 L21 11 L11 21" fill="none" stroke="#e0201a" stroke-width="1.8"/></svg>
<svg style="left:389px;top:135px" width="22" height="22" viewBox="0 0 22 22"><path d="M1 21 V2 H21 V21" fill="none" stroke="#60d020" stroke-width="1.8"/><path d="M1.1 1.9 L5.5 0.3 L16.2 1.9 L13 3.1Z" fill="#e8e8e8" stroke="#7a7a7a" stroke-width=".5"/><path d="M1.1 1.9 L13 3.1 L13 18.8 L1.8 15.7Z" fill="#d8d8d8" stroke="#7a7a7a" stroke-width=".6"/><path d="M13 3.1 L16.2 1.9 L18.5 7 V14 L13 18.8Z" fill="#bcbcbc" stroke="#7a7a7a" stroke-width=".5"/><circle cx="7.1" cy="9.8" r="4.9" fill="#606060" stroke="#444" stroke-width=".4"/><path d="M2.2 9.8 A4.9 4.9 0 0 1 12 9.8Z" fill="#f2d000"/><ellipse cx="15.6" cy="10.4" rx="1.2" ry="3" fill="#e8c800"/><path d="M14 17.5 L21.5 20.2" stroke="#e8c800" stroke-width="1.8"/><path d="M14 17.5 L21.5 20.2" stroke="#8a7400" stroke-width=".3"/></svg>
<svg style="left:444px;top:135px" width="22" height="22" viewBox="0 0 22 22"><path d="M2.6 7.2 L10.1 1.1 L14.3 3.5 V9.1 L16.2 8.6 L19.5 11.4 V17.1 L12.9 20.8 L3 16.1Z" fill="#3a6ab8" stroke="#14305a" stroke-width=".8"/><path d="M2.6 7.2 L10.1 1.1 L14.3 3.5 L6.8 9.6Z" fill="#8ab8f0" stroke="#14305a" stroke-width=".5"/><path d="M6.8 13 L14.3 9.1 L19.5 11.4 L12.9 15.2Z" fill="#8ab8f0" stroke="#14305a" stroke-width=".5"/><path d="M2.6 7.2 L6.8 9.6 V13 L12.9 15.2 V20.8 L3 16.1Z" fill="#5b8fd6" stroke="#14305a" stroke-width=".5"/></svg>
<svg style="left:483px;top:135px" width="22" height="22" viewBox="0 0 22 22"><path d="M0 0 H18 V19 L16 21 H0Z" fill="#ececec" stroke="#bbb" stroke-width=".5"/><rect x="2" y="9" width="9" height="9" fill="none" stroke="#d81010" stroke-width="1.4"/><circle cx="12" cy="8" r="5" fill="none" stroke="#d81010" stroke-width="1.4"/></svg>
<svg style="left:518px;top:135px" width="22" height="22" viewBox="0 0 22 22"><path d="M1 12 V21 H22 V12" fill="none" stroke="#c8c8c8" stroke-width="2.2"/><path d="M9 1 H14 V8 H18 L11.5 14 L5 8 H9Z" fill="#a8a8a8"/></svg>
<svg style="left:556px;top:135px" width="22" height="22" viewBox="0 0 22 22"><path d="M1 6 L10 3 V22 L1 19Z" fill="#ececec" stroke="#bbb" stroke-width=".5"/><path d="M7 4 L15 1 L22 3 L14 6Z" fill="#7aaae8"/><path d="M14 6 L22 3 V19 L14 22Z" fill="#3a6ab8"/><path d="M10 5 L14 6 V22 L10 21Z" fill="#5b8fd6"/><rect x="3" y="10" width="5" height="6" fill="none" stroke="#d81010" stroke-width="1"/><circle cx="6" cy="9" r="3" fill="none" stroke="#d81010" stroke-width="1"/></svg>
<svg style="left:593px;top:135px" width="22" height="22" viewBox="0 0 22 22"><path d="M1 0 H19 V22 H1Z" fill="#e4e4e4" stroke="#aaa" stroke-width=".5"/><rect x="3" y="10" width="9" height="9" fill="none" stroke="#9a9a9a" stroke-width="1.4"/><circle cx="12" cy="9" r="5.5" fill="none" stroke="#9a9a9a" stroke-width="1.4"/><circle cx="16" cy="17" r="5" fill="#a0a0a0"/><path d="M13 17 L15.5 19.5 L19.5 14.5" fill="none" stroke="#e8e8e8" stroke-width="1.4"/></svg>
<svg style="left:638px;top:135px" width="22" height="22" viewBox="0 0 22 22"><circle cx="11" cy="11" r="3" fill="#d81010" stroke="#3a6ab8" stroke-width="1.3"/></svg>
<svg style="left:675px;top:135px" width="22" height="22" viewBox="0 0 22 22"><path d="M3 19 L19 3" stroke="#5b8fd6" stroke-width="1.6"/><circle cx="3" cy="19" r="1.8" fill="#e0201a"/><circle cx="19" cy="3" r="1.8" fill="#e0201a"/></svg>
<svg style="left:712px;top:135px" width="22" height="22" viewBox="0 0 22 22"><path d="M12.5 1.5 L20 9.5 L9.5 19.5 L2 12.5Z" fill="none" stroke="#5b8fd6" stroke-width="1.6"/><circle cx="12.5" cy="1.5" r="1.8" fill="#e0201a"/><circle cx="20" cy="9.5" r="1.8" fill="#e0201a"/><circle cx="9.5" cy="19.5" r="1.8" fill="#e0201a"/><circle cx="2" cy="12.5" r="1.8" fill="#e0201a"/></svg>
<svg style="left:749px;top:135px" width="22" height="22" viewBox="0 0 22 22"><path d="M10 1.5 V12.5 L20.5 12.5 M10 12.5 L2.5 20" stroke="#5b8fd6" stroke-width="1.6" fill="none"/><circle cx="10" cy="1.5" r="1.8" fill="#e0201a"/><circle cx="20.5" cy="12.5" r="1.8" fill="#e0201a"/><circle cx="2.5" cy="20" r="1.8" fill="#e0201a"/><circle cx="10" cy="12.5" r="1.8" fill="#e0201a"/></svg>
<svg style="left:786px;top:135px" width="22" height="22" viewBox="0 0 22 22"><defs><radialGradient id="bsg" cx=".55" cy=".65" r=".6"><stop offset="0" stop-color="#2a5aa0"/><stop offset="1" stop-color="#8ab8f0"/></radialGradient></defs><path d="M1 1.3 Q5 2.8 9.5 2.5 Q15 0 20 0.5 Q22.5 3 22 6.5 Q18 9 17 13 Q16.5 17 17 20.3 L13 21.7 Q6 19 0.5 18 Q1.8 10 1 1.3Z" fill="url(#bsg)" stroke="#102040" stroke-width=".6"/><circle cx="20.1" cy="1.9" r="1.9" fill="#e0201a" stroke="#600" stroke-width=".3"/><circle cx="2" cy="9.4" r="1.9" fill="#e0201a" stroke="#600" stroke-width=".3"/><circle cx="17" cy="20" r="1.9" fill="#e0201a" stroke="#600" stroke-width=".3"/></svg>
<svg style="left:823px;top:135px" width="22" height="22" viewBox="0 0 22 22"><defs><radialGradient id="gsg" cx=".55" cy=".6" r=".6"><stop offset="0" stop-color="#3a9a10"/><stop offset="1" stop-color="#74d81a"/></radialGradient></defs><path d="M1 1.3 Q5 2.8 9.5 2.5 Q15 0 20 0.5 Q22.5 3 22 6.5 Q18 9 17 13 Q16.5 17 17 20.3 L13 21.7 Q6 19 0.5 18 Q1.8 10 1 1.3Z" fill="url(#gsg)" stroke="#1a3a08" stroke-width=".6"/><circle cx="20.1" cy="1.9" r="1.9" fill="#e0201a" stroke="#600" stroke-width=".3"/><circle cx="2" cy="9.4" r="1.9" fill="#e0201a" stroke="#600" stroke-width=".3"/><circle cx="17" cy="20" r="1.9" fill="#e0201a" stroke="#600" stroke-width=".3"/></svg>
<svg style="left:860px;top:135px" width="22" height="22" viewBox="0 0 22 22"><ellipse cx="3" cy="11.5" rx="2.6" ry="3.8" fill="#b0b0b0" transform="rotate(25 3 11.5)"/><ellipse cx="19.3" cy="11.5" rx="2.6" ry="3.8" fill="#b0b0b0" transform="rotate(-25 19.3 11.5)"/><g fill="#c4c4c4"><circle cx="6" cy="4" r="3"/><circle cx="11" cy="2.8" r="3"/><circle cx="16" cy="4" r="3"/><circle cx="11" cy="6" r="4"/></g><path d="M5.5 7 Q11 4.5 16.5 7 L16 16 Q14.5 21.5 11 21.5 Q7.5 21.5 6 16Z" fill="#c0c0c0"/><ellipse cx="11" cy="10.8" rx="3.8" ry="2" fill="#f4f4f4"/><ellipse cx="11" cy="10.8" rx="1.8" ry="1" fill="#555"/><path d="M9.5 18.8 L11 19.6 L12.5 18.8" fill="none" stroke="#888" stroke-width=".6"/></svg>
<div style="left:143px;top:54px;width:180px;height:20px;background:#5a7fbd;"></div>
<div style="left:323px;top:53px;width:20px;height:22px;background:#2a2a2a;"></div>
<svg style="left:328px;top:61px" width="10" height="6" viewBox="0 0 9 6"><path d="M1 1 L4.5 4.5 L8 1" fill="none" stroke="#e6e6e6" stroke-width="1.6"/></svg>
<svg style="left:145px;top:56px" width="16" height="15" viewBox="0 0 16 15"><path d="M2 6 L9 4 L15 6 L8 8Z" fill="#8ab8f0"/><path d="M2 6 L8 8 V14 L2 12Z" fill="#3a6ab8" stroke="#1f3f70" stroke-width=".5"/><path d="M8 8 L15 6 V12 L8 14Z" fill="#2a5aa0" stroke="#1f3f70" stroke-width=".5"/><path d="M1 1 L4 0 L9 6 L7 8Z" fill="#e8c820" stroke="#555" stroke-width=".5"/></svg>
<div class="t" style="left:167px;top:59px;font-size:11.6px;color:#ffffff;font-weight:bold">Part Design</div>
<div style="left:3px;top:167px;width:449px;height:18px;background:#2a2a2a;"></div>
<div class="t" style="left:173px;top:171px;font-size:12px;color:#c8c8c8;">Combo View</div>
<div style="left:7px;top:189px;width:56px;height:27px;background:#333333;border:1px solid #3a3a3a;border-top:none"></div>
<div style="left:7px;top:189px;width:56px;height:4px;background:#5a7fbf;"></div>
<div class="t" style="left:19px;top:198px;font-size:10.5px;color:#ffffff;">Model</div>
<div style="left:64px;top:189px;width:59px;height:27px;background:#3a3a3a;"></div>
<div class="t" style="left:79px;top:198px;font-size:11px;color:#9a9a9a;">Tasks</div>
<div style="left:4px;top:223px;width:447px;height:341px;background:#3b3b3b;"></div>
<div style="left:4px;top:263px;width:332px;height:20px;background:#5a7fbd;"></div>
<div class="t" style="left:49px;top:228px;font-size:11.6px;color:#f0f0f0;font-weight:bold">Container parametrico V2 (com tolerancia na rosca)</div>
<div class="t" style="left:69px;top:248px;font-size:12px;color:#f0f0f0;">Construction</div>
<div class="t" style="left:69px;top:268px;font-size:12px;color:#ffffff;">Parameters</div>
<div class="t" style="left:69px;top:288px;font-size:12px;color:#f0f0f0;">Final parts</div>
<div class="t" style="left:89px;top:308px;font-size:12px;color:#f0f0f0;">Origin004</div>
<div class="t" style="left:89px;top:328px;font-size:12px;color:#f0f0f0;">Lid_final</div>
<div class="t" style="left:89px;top:348px;font-size:12px;color:#f0f0f0;">Container_final</div>
<div style="left:4px;top:588px;width:447px;height:31px;background:#2a2a2a;"></div>
<div style="left:103px;top:588px;width:1px;height:30px;background:#444444;"></div>
<div class="t" style="left:10px;top:598px;font-size:12px;color:#e6e6e6;">Property</div>
<div class="t" style="left:110px;top:598px;font-size:12px;color:#e6e6e6;">Value</div>
<div style="left:4px;top:620px;width:446px;height:18px;background:#2a2a2a;"></div>
<div class="t" style="left:7px;top:625px;font-size:10.5px;color:#e6e6e6;font-weight:bold">Base</div>
<div style="left:4px;top:638px;width:447px;height:21px;background:#323232;"></div>
<div class="t" style="left:27px;top:644px;font-size:11.5px;color:#f0f0f0;">Label</div>
<div class="t" style="left:107px;top:644px;font-size:11.3px;color:#f0f0f0;">Parameters</div>
<div style="left:4px;top:659px;width:447px;height:303px;background:#3b3b3b;"></div>
<div style="left:5px;top:969px;width:59px;height:27px;background:#3a3a3a;"></div>
<div class="t" style="left:23px;top:978px;font-size:10.5px;color:#9a9a9a;">View</div>
<div style="left:65px;top:969px;width:57px;height:27px;background:#333333;"></div>
<div style="left:65px;top:992px;width:57px;height:4px;background:#5a7fbf;"></div>
<div class="t" style="left:81px;top:978px;font-size:11px;color:#ffffff;">Data</div>
<div class="t" style="left:6px;top:1010px;font-size:11px;color:#f0f0f0;">Valid, Internal name: Body003</div>
<div class="t" style="left:477px;top:181px;font-size:11px;color:#f0f0f0;">Content:</div>
<div style="left:526px;top:176px;width:1007px;height:18px;background:#4a4a4a;"></div>
<div class="t" style="left:1540px;top:181px;font-size:11px;color:#f0f0f0;">Alias:</div>
<div style="left:1572px;top:176px;width:336px;height:18px;background:#4a4a4a;"></div>
<div style="left:478px;top:201px;width:1429px;height:755px;background:#2a2a2a;"></div>
<div style="left:528px;top:231px;width:1364px;height:710px;background:#d0d0d0;"></div>
<div style="left:478px;top:201px;width:1414px;height:740px;overflow:hidden">
<div style="left:49px;top:0px;width:1px;height:30px;background:#4a4a4a;"></div>
<div class="t" style="left:50px;top:10px;width:282px;text-align:center;font-size:12px;color:#e6e6e6">A</div>
<div style="left:332px;top:0px;width:1px;height:30px;background:#4a4a4a;"></div>
<div class="t" style="left:333px;top:10px;width:99px;text-align:center;font-size:12px;color:#e6e6e6">B</div>
<div style="left:332px;top:30px;width:1px;height:710px;background:#a6a6a6;"></div>
<div style="left:432px;top:0px;width:1px;height:30px;background:#4a4a4a;"></div>
<div class="t" style="left:433px;top:10px;width:204px;text-align:center;font-size:12px;color:#e6e6e6">C</div>
<div style="left:432px;top:30px;width:1px;height:710px;background:#a6a6a6;"></div>
<div style="left:637px;top:0px;width:1px;height:30px;background:#4a4a4a;"></div>
<div class="t" style="left:638px;top:10px;width:99px;text-align:center;font-size:12px;color:#e6e6e6">D</div>
<div style="left:637px;top:30px;width:1px;height:710px;background:#a6a6a6;"></div>
<div style="left:737px;top:0px;width:1px;height:30px;background:#4a4a4a;"></div>
<div class="t" style="left:738px;top:10px;width:99px;text-align:center;font-size:12px;color:#e6e6e6">E</div>
<div style="left:737px;top:30px;width:1px;height:710px;background:#a6a6a6;"></div>
<div style="left:837px;top:0px;width:1px;height:30px;background:#4a4a4a;"></div>
<div class="t" style="left:838px;top:10px;width:99px;text-align:center;font-size:12px;color:#e6e6e6">F</div>
<div style="left:837px;top:30px;width:1px;height:710px;background:#a6a6a6;"></div>
<div style="left:937px;top:0px;width:1px;height:30px;background:#4a4a4a;"></div>
<div class="t" style="left:938px;top:10px;width:99px;text-align:center;font-size:12px;color:#e6e6e6">G</div>
<div style="left:937px;top:30px;width:1px;height:710px;background:#a6a6a6;"></div>
<div style="left:1037px;top:0px;width:1px;height:30px;background:#4a4a4a;"></div>
<div class="t" style="left:1038px;top:10px;width:99px;text-align:center;font-size:12px;color:#e6e6e6">H</div>
<div style="left:1037px;top:30px;width:1px;height:710px;background:#a6a6a6;"></div>
<div style="left:1137px;top:0px;width:1px;height:30px;background:#4a4a4a;"></div>
<div class="t" style="left:1138px;top:10px;width:99px;text-align:center;font-size:12px;color:#e6e6e6">I</div>
<div style="left:1137px;top:30px;width:1px;height:710px;background:#a6a6a6;"></div>
<div style="left:1237px;top:0px;width:1px;height:30px;background:#4a4a4a;"></div>
<div class="t" style="left:1238px;top:10px;width:99px;text-align:center;font-size:12px;color:#e6e6e6">J</div>
<div style="left:1237px;top:30px;width:1px;height:710px;background:#a6a6a6;"></div>
<div style="left:1337px;top:0px;width:1px;height:30px;background:#4a4a4a;"></div>
<div class="t" style="left:1338px;top:10px;width:99px;text-align:center;font-size:12px;color:#e6e6e6">K</div>
<div style="left:1337px;top:30px;width:1px;height:710px;background:#a6a6a6;"></div>
</div>
<div style="left:478px;top:230px;width:1414px;height:1px;background:#4a4a4a;"></div>
<div style="left:528px;top:260px;width:1364px;height:1px;background:#a6a6a6;"></div>
<div style="left:478px;top:260px;width:50px;height:1px;background:#4a4a4a;"></div>
<div class="t" style="left:484px;top:240px;font-size:12px;color:#e6e6e6;">1</div>
<div style="left:528px;top:290px;width:1364px;height:1px;background:#a6a6a6;"></div>
<div style="left:478px;top:290px;width:50px;height:1px;background:#4a4a4a;"></div>
<div class="t" style="left:484px;top:270px;font-size:12px;color:#e6e6e6;">2</div>
<div style="left:528px;top:320px;width:1364px;height:1px;background:#a6a6a6;"></div>
<div style="left:478px;top:320px;width:50px;height:1px;background:#4a4a4a;"></div>
<div class="t" style="left:484px;top:300px;font-size:12px;color:#e6e6e6;">3</div>
<div style="left:528px;top:350px;width:1364px;height:1px;background:#a6a6a6;"></div>
<div style="left:478px;top:350px;width:50px;height:1px;background:#4a4a4a;"></div>
<div class="t" style="left:484px;top:330px;font-size:12px;color:#e6e6e6;">4</div>
<div style="left:528px;top:380px;width:1364px;height:1px;background:#a6a6a6;"></div>
<div style="left:478px;top:380px;width:50px;height:1px;background:#4a4a4a;"></div>
<div class="t" style="left:484px;top:360px;font-size:12px;color:#e6e6e6;">5</div>
<div style="left:528px;top:410px;width:1364px;height:1px;background:#a6a6a6;"></div>
<div style="left:478px;top:410px;width:50px;height:1px;background:#4a4a4a;"></div>
<div class="t" style="left:484px;top:390px;font-size:12px;color:#e6e6e6;">6</div>
<div style="left:528px;top:440px;width:1364px;height:1px;background:#a6a6a6;"></div>
<div style="left:478px;top:440px;width:50px;height:1px;background:#4a4a4a;"></div>
<div class="t" style="left:484px;top:420px;font-size:12px;color:#e6e6e6;">7</div>
<div style="left:528px;top:470px;width:1364px;height:1px;background:#a6a6a6;"></div>
<div style="left:478px;top:470px;width:50px;height:1px;background:#4a4a4a;"></div>
<div class="t" style="left:484px;top:450px;font-size:12px;color:#e6e6e6;">8</div>
<div style="left:528px;top:500px;width:1364px;height:1px;background:#a6a6a6;"></div>
<div style="left:478px;top:500px;width:50px;height:1px;background:#4a4a4a;"></div>
<div class="t" style="left:484px;top:480px;font-size:12px;color:#e6e6e6;">9</div>
<div style="left:528px;top:530px;width:1364px;height:1px;background:#a6a6a6;"></div>
<div style="left:478px;top:530px;width:50px;height:1px;background:#4a4a4a;"></div>
<div class="t" style="left:484px;top:510px;font-size:12px;color:#e6e6e6;">10</div>
<div style="left:528px;top:560px;width:1364px;height:1px;background:#a6a6a6;"></div>
<div style="left:478px;top:560px;width:50px;height:1px;background:#4a4a4a;"></div>
<div class="t" style="left:484px;top:540px;font-size:12px;color:#e6e6e6;">11</div>
<div style="left:528px;top:590px;width:1364px;height:1px;background:#a6a6a6;"></div>
<div style="left:478px;top:590px;width:50px;height:1px;background:#4a4a4a;"></div>
<div class="t" style="left:484px;top:570px;font-size:12px;color:#e6e6e6;">12</div>
<div style="left:528px;top:620px;width:1364px;height:1px;background:#a6a6a6;"></div>
<div style="left:478px;top:620px;width:50px;height:1px;background:#4a4a4a;"></div>
<div class="t" style="left:484px;top:600px;font-size:12px;color:#e6e6e6;">13</div>
<div style="left:528px;top:650px;width:1364px;height:1px;background:#a6a6a6;"></div>
<div style="left:478px;top:650px;width:50px;height:1px;background:#4a4a4a;"></div>
<div class="t" style="left:484px;top:630px;font-size:12px;color:#e6e6e6;">14</div>
<div style="left:528px;top:680px;width:1364px;height:1px;background:#a6a6a6;"></div>
<div style="left:478px;top:680px;width:50px;height:1px;background:#4a4a4a;"></div>
<div class="t" style="left:484px;top:660px;font-size:12px;color:#e6e6e6;">15</div>
<div style="left:528px;top:710px;width:1364px;height:1px;background:#a6a6a6;"></div>
<div style="left:478px;top:710px;width:50px;height:1px;background:#4a4a4a;"></div>
<div class="t" style="left:484px;top:690px;font-size:12px;color:#e6e6e6;">16</div>
<div style="left:528px;top:740px;width:1364px;height:1px;background:#a6a6a6;"></div>
<div style="left:478px;top:740px;width:50px;height:1px;background:#4a4a4a;"></div>
<div class="t" style="left:484px;top:720px;font-size:12px;color:#e6e6e6;">17</div>
<div style="left:528px;top:770px;width:1364px;height:1px;background:#a6a6a6;"></div>
<div style="left:478px;top:770px;width:50px;height:1px;background:#4a4a4a;"></div>
<div class="t" style="left:484px;top:750px;font-size:12px;color:#e6e6e6;">18</div>
<div style="left:528px;top:800px;width:1364px;height:1px;background:#a6a6a6;"></div>
<div style="left:478px;top:800px;width:50px;height:1px;background:#4a4a4a;"></div>
<div class="t" style="left:484px;top:780px;font-size:12px;color:#e6e6e6;">19</div>
<div style="left:528px;top:830px;width:1364px;height:1px;background:#a6a6a6;"></div>
<div style="left:478px;top:830px;width:50px;height:1px;background:#4a4a4a;"></div>
<div class="t" style="left:484px;top:810px;font-size:12px;color:#e6e6e6;">20</div>
<div style="left:528px;top:860px;width:1364px;height:1px;background:#a6a6a6;"></div>
<div style="left:478px;top:860px;width:50px;height:1px;background:#4a4a4a;"></div>
<div class="t" style="left:484px;top:840px;font-size:12px;color:#e6e6e6;">21</div>
<div style="left:528px;top:890px;width:1364px;height:1px;background:#a6a6a6;"></div>
<div style="left:478px;top:890px;width:50px;height:1px;background:#4a4a4a;"></div>
<div class="t" style="left:484px;top:870px;font-size:12px;color:#e6e6e6;">22</div>
<div style="left:528px;top:920px;width:1364px;height:1px;background:#a6a6a6;"></div>
<div style="left:478px;top:920px;width:50px;height:1px;background:#4a4a4a;"></div>
<div class="t" style="left:484px;top:900px;font-size:12px;color:#e6e6e6;">23</div>
<div class="t" style="left:484px;top:930px;font-size:12px;color:#e6e6e6;">24</div>
<div style="left:811px;top:231px;width:99px;height:29px;background:#ffffa6;"></div>
<div style="left:811px;top:261px;width:99px;height:29px;background:#ffffa6;"></div>
<div style="left:811px;top:291px;width:99px;height:29px;background:#ffffa6;"></div>
<div style="left:811px;top:321px;width:99px;height:29px;background:#ffffa6;"></div>
<div style="left:811px;top:351px;width:99px;height:29px;background:#ffffa6;"></div>
<div style="left:811px;top:381px;width:99px;height:29px;background:#ffffa6;"></div>
<div class="t" style="left:531px;top:240px;font-size:12.2px;color:#000000;">Internal diameter</div>
<div class="t" style="left:811px;top:240px;width:96px;text-align:right;font-size:12px;letter-spacing:-0.35px;color:#000">105,00 mm</div>
<div class="t" style="left:531px;top:270px;font-size:12.2px;color:#000000;">Wall thickness</div>
<div class="t" style="left:811px;top:270px;width:96px;text-align:right;font-size:12px;letter-spacing:-0.35px;color:#000">2,00 mm</div>
<div class="t" style="left:914px;top:270px;font-size:12.2px;color:#000000;">Maximum 4 mm - Recommended 2</div>
<div class="t" style="left:531px;top:300px;font-size:12.2px;color:#000000;">External container height (without lid) (mm)</div>
<div class="t" style="left:811px;top:300px;width:96px;text-align:right;font-size:12px;letter-spacing:-0.35px;color:#000">78,00 mm</div>
<div class="t" style="left:914px;top:300px;font-size:12.2px;color:#000000;">Minimum 7 mm</div>
<div class="t" style="left:531px;top:330px;font-size:12.2px;color:#000000;">Thread depth</div>
<div class="t" style="left:811px;top:330px;width:96px;text-align:right;font-size:12px;letter-spacing:-0.35px;color:#000">5,00 mm</div>
<div class="t" style="left:914px;top:330px;font-size:12.2px;color:#000000;">Recommended 5 mm</div>
<div class="t" style="left:531px;top:360px;font-size:12.2px;color:#000000;">Base/internal chamfer</div>
<div class="t" style="left:811px;top:360px;width:96px;text-align:right;font-size:12px;letter-spacing:-0.35px;color:#000">1,50 mm</div>
<div class="t" style="left:914px;top:360px;font-size:12.2px;color:#000000;">Recommended maximum 4 mm</div>
<div class="t" style="left:531px;top:390px;font-size:12.2px;color:#000000;">Thread tolerance</div>
<div class="t" style="left:811px;top:390px;width:96px;text-align:right;font-size:12px;letter-spacing:-0.35px;color:#000">1,00 mm</div>
<div style="left:1892px;top:941px;width:15px;height:15px;background:#d3d3d3;"></div>
<div style="left:1896px;top:216px;width:7px;height:24px;background:#6e6e6e;"></div>
<div style="left:493px;top:945px;width:5px;height:7px;background:#6e6e6e;"></div>
<div style="left:468px;top:966px;width:348px;height:30px;background:#3b3b3b;"></div>
<div class="t" style="left:506px;top:977px;font-size:10.9px;color:#b8b8b8;">Container parametrico V2 (com tolerancia na rosca) : 1*</div>
<div style="left:816px;top:966px;width:131px;height:30px;background:#333333;"></div>
<div style="left:816px;top:992px;width:131px;height:4px;background:#5a7fbf;"></div>
<div class="t" style="left:852px;top:977px;font-size:10.7px;color:#ffffff;">Parameters</div>
<div style="left:1635px;top:1000px;width:94px;height:28px;background:#5a7fbd;"></div>
<div class="t" style="left:1670px;top:1010px;font-size:10.4px;color:#e8eef8;">Blender</div>
<div style="left:1740px;top:1003px;width:172px;height:23px;background:#2a2a2a;border:1px solid #474747"></div>
<div class="t" style="left:1761px;top:1010px;font-size:10.6px;color:#ffffff;">242,95 mm x 182,21 mm</div>
<div style="left:0px;top:968px;width:460px;height:1px;background:#2d2d33;"></div>
<svg style="left:0px;top:3px" width="16" height="16" viewBox="0 0 16 16"><path d="M0 0.5 H8 V4 H3.2 V6 H6.5 V9.5 H3.2 V15.5 H0Z" fill="#e01818"/><g transform="translate(9,10)"><circle r="4.6" fill="#4a7cc0"/><g fill="#4a7cc0"><rect x="-1.2" y="-6.2" width="2.4" height="3" transform="rotate(0)"/><rect x="-1.2" y="-6.2" width="2.4" height="3" transform="rotate(45)"/><rect x="-1.2" y="-6.2" width="2.4" height="3" transform="rotate(90)"/><rect x="-1.2" y="-6.2" width="2.4" height="3" transform="rotate(135)"/><rect x="-1.2" y="-6.2" width="2.4" height="3" transform="rotate(180)"/><rect x="-1.2" y="-6.2" width="2.4" height="3" transform="rotate(225)"/><rect x="-1.2" y="-6.2" width="2.4" height="3" transform="rotate(270)"/><rect x="-1.2" y="-6.2" width="2.4" height="3" transform="rotate(315)"/></g><circle r="1.6" fill="#fff"/></g></svg>
<div style="left:1796px;top:10px;width:10px;height:1px;background:#1a1a1a;"></div>
<svg style="left:1840px;top:4px" width="12" height="12" viewBox="0 0 12 12"><rect x="0.5" y="2.5" width="8.5" height="8.5" rx="1.2" fill="none" stroke="#1a1a1a" stroke-width="1"/><path d="M2.5 0.5 H9.5 Q11.5 0.5 11.5 2.5 V9" fill="none" stroke="#1a1a1a" stroke-width="1"/></svg>
<svg style="left:1886px;top:5px" width="11" height="11" viewBox="0 0 11 11"><path d="M0.5 0.5 L10.5 10.5 M10.5 0.5 L0.5 10.5" stroke="#1a1a1a" stroke-width="1"/></svg>
<svg style="left:418px;top:172px" width="8" height="8" viewBox="0 0 8 8"><path d="M0 2.5 V0 H2.5 M5.5 0 H8 V2.5 M8 5.5 V8 H5.5 M2.5 8 H0 V5.5" fill="none" stroke="#9a9a9a" stroke-width="1"/></svg>
<svg style="left:436px;top:172px" width="8" height="8" viewBox="0 0 8 8"><path d="M0.5 0.5 L7.5 7.5 M7.5 0.5 L0.5 7.5" stroke="#bdbdbd" stroke-width="1.2"/></svg>
<div style="left:13px;top:222px;width:1px;height:14px;background:#8a8a8a;"></div>
<div style="left:18px;top:233px;width:6px;height:1px;background:#8a8a8a;"></div>
<div style="left:33px;top:243px;width:1px;height:49px;background:#8a8a8a;"></div>
<div style="left:36px;top:253px;width:8px;height:1px;background:#8a8a8a;"></div>
<div style="left:33px;top:273px;width:11px;height:1px;background:#8a8a8a;"></div>
<div style="left:38px;top:293px;width:6px;height:1px;background:#8a8a8a;"></div>
<div style="left:53px;top:303px;width:1px;height:50px;background:#8a8a8a;"></div>
<div style="left:56px;top:313px;width:8px;height:1px;background:#8a8a8a;"></div>
<div style="left:56px;top:333px;width:8px;height:1px;background:#8a8a8a;"></div>
<div style="left:56px;top:353px;width:8px;height:1px;background:#8a8a8a;"></div>
<svg style="left:9px;top:231px" width="10" height="6" viewBox="0 0 10 6"><path d="M1 1 L5 5 L9 1" fill="none" stroke="#dcdcdc" stroke-width="1.8"/></svg>
<svg style="left:29px;top:291px" width="10" height="6" viewBox="0 0 10 6"><path d="M1 1 L5 5 L9 1" fill="none" stroke="#dcdcdc" stroke-width="1.8"/></svg>
<svg style="left:31px;top:248px" width="6" height="10" viewBox="0 0 6 10"><path d="M1 1 L5 5 L1 9" fill="none" stroke="#dcdcdc" stroke-width="1.8"/></svg>
<svg style="left:51px;top:308px" width="6" height="10" viewBox="0 0 6 10"><path d="M1 1 L5 5 L1 9" fill="none" stroke="#dcdcdc" stroke-width="1.8"/></svg>
<svg style="left:51px;top:328px" width="6" height="10" viewBox="0 0 6 10"><path d="M1 1 L5 5 L1 9" fill="none" stroke="#dcdcdc" stroke-width="1.8"/></svg>
<svg style="left:51px;top:348px" width="6" height="10" viewBox="0 0 6 10"><path d="M1 1 L5 5 L1 9" fill="none" stroke="#dcdcdc" stroke-width="1.8"/></svg>
<svg style="left:29px;top:226px" width="12" height="14" viewBox="0 0 12 14"><rect x="0" y="0" width="12" height="14" fill="#f4f4f4"/><circle cx="8.5" cy="4.5" r="3" fill="#e01010"/><path d="M2 6 L6 4.5 L10 6 L6 7.5Z" fill="#8ab8f0"/><path d="M2 6 L6 7.5 V12.5 L2 11Z" fill="#3a6ab8"/><path d="M6 7.5 L10 6 V11 L6 12.5Z" fill="#2a5aa0"/></svg>
<svg style="left:49px;top:246px" width="14" height="15" viewBox="0 0 14 15"><g transform="translate(-1.5,-1) scale(0.66)"><path d="M2.5 14 L12.5 8 L19.5 11 L10 17Z" fill="#f0f0f0" stroke="#7a7a7a" stroke-width=".9"/><path d="M2.5 14 L10 17 V21.5 L2.5 18.5Z" fill="#d4d4d4" stroke="#7a7a7a" stroke-width=".9"/><path d="M10 17 L19.5 11 V15.5 L10 21.5Z" fill="#b8b8b8" stroke="#7a7a7a" stroke-width=".9"/><path d="M3 7 L9.5 2 L14 4 L7 9Z" fill="#f0f0f0" stroke="#7a7a7a" stroke-width=".9"/><path d="M3 7 L7 9 V13.5 L3 11.5Z" fill="#d4d4d4" stroke="#7a7a7a" stroke-width=".9"/><path d="M7 9 L14 4 V8.8 L7 13.5Z" fill="#b8b8b8" stroke="#7a7a7a" stroke-width=".9"/></g></svg>
<svg style="left:47px;top:267px" width="16" height="13" viewBox="0 0 16 13"><rect x="0.5" y="0.5" width="15" height="12" fill="#0c1a30"/><rect x="2.0" y="2" width="3.3" height="2" fill="#f0f6ff"/><rect x="6.5" y="2" width="3.3" height="2" fill="#f0f6ff"/><rect x="11.0" y="2" width="3.3" height="2" fill="#f0f6ff"/><rect x="2.0" y="5" width="3.3" height="2" fill="#f0f6ff"/><rect x="6.5" y="5" width="3.3" height="2" fill="#f0f6ff"/><rect x="11.0" y="5" width="3.3" height="2" fill="#f0f6ff"/><rect x="2.0" y="8" width="3.3" height="2" fill="#f0f6ff"/><rect x="6.5" y="8" width="3.3" height="2" fill="#f0f6ff"/><rect x="11.0" y="8" width="3.3" height="2" fill="#f0f6ff"/></svg>
<svg style="left:49px;top:286px" width="14" height="15" viewBox="0 0 14 15"><g transform="translate(-1.5,-1) scale(0.66)"><path d="M2.5 14 L12.5 8 L19.5 11 L10 17Z" fill="#fff27a" stroke="#6a5a00" stroke-width=".9"/><path d="M2.5 14 L10 17 V21.5 L2.5 18.5Z" fill="#e8d400" stroke="#6a5a00" stroke-width=".9"/><path d="M10 17 L19.5 11 V15.5 L10 21.5Z" fill="#c8b000" stroke="#6a5a00" stroke-width=".9"/><path d="M3 7 L9.5 2 L14 4 L7 9Z" fill="#fff27a" stroke="#6a5a00" stroke-width=".9"/><path d="M3 7 L7 9 V13.5 L3 11.5Z" fill="#e8d400" stroke="#6a5a00" stroke-width=".9"/><path d="M7 9 L14 4 V8.8 L7 13.5Z" fill="#c8b000" stroke="#6a5a00" stroke-width=".9"/></g></svg>
<svg style="left:69px;top:306px" width="14" height="14" viewBox="0 0 14 14"><path d="M5.5 0 V8 L14 8 M5.5 8 L0 13" fill="none" stroke="#9a9a9a" stroke-width="1.4"/></svg>
<svg style="left:69px;top:326px" width="13" height="14" viewBox="0 0 13 14"><g transform="scale(0.68)"><path d="M2.6 7.2 L10.1 1.1 L14.3 3.5 V9.1 L16.2 8.6 L19.5 11.4 V17.1 L12.9 20.8 L3 16.1Z" fill="#3a6ab8" stroke="#14305a" stroke-width=".8"/><path d="M2.6 7.2 L10.1 1.1 L14.3 3.5 L6.8 9.6Z" fill="#8ab8f0" stroke="#14305a" stroke-width=".5"/><path d="M6.8 13 L14.3 9.1 L19.5 11.4 L12.9 15.2Z" fill="#8ab8f0" stroke="#14305a" stroke-width=".5"/><path d="M2.6 7.2 L6.8 9.6 V13 L12.9 15.2 V20.8 L3 16.1Z" fill="#5b8fd6" stroke="#14305a" stroke-width=".5"/></g></svg>
<svg style="left:69px;top:346px" width="13" height="14" viewBox="0 0 13 14"><g transform="scale(0.68)"><path d="M2.6 7.2 L10.1 1.1 L14.3 3.5 V9.1 L16.2 8.6 L19.5 11.4 V17.1 L12.9 20.8 L3 16.1Z" fill="#3a6ab8" stroke="#14305a" stroke-width=".8"/><path d="M2.6 7.2 L10.1 1.1 L14.3 3.5 L6.8 9.6Z" fill="#8ab8f0" stroke="#14305a" stroke-width=".5"/><path d="M6.8 13 L14.3 9.1 L19.5 11.4 L12.9 15.2Z" fill="#8ab8f0" stroke="#14305a" stroke-width=".5"/><path d="M2.6 7.2 L6.8 9.6 V13 L12.9 15.2 V20.8 L3 16.1Z" fill="#5b8fd6" stroke="#14305a" stroke-width=".5"/></g></svg>
<div style="left:208px;top:575px;width:6px;height:2px;background:#e6e6e6;"></div>
<div style="left:462px;top:562px;width:2px;height:6px;background:#e6e6e6;"></div>
<div style="left:216px;top:575px;width:6px;height:2px;background:#e6e6e6;"></div>
<div style="left:462px;top:570px;width:2px;height:6px;background:#e6e6e6;"></div>
<div style="left:224px;top:575px;width:6px;height:2px;background:#e6e6e6;"></div>
<div style="left:462px;top:578px;width:2px;height:6px;background:#e6e6e6;"></div>
<div style="left:232px;top:575px;width:6px;height:2px;background:#e6e6e6;"></div>
<div style="left:462px;top:586px;width:2px;height:6px;background:#e6e6e6;"></div>
<div style="left:240px;top:575px;width:6px;height:2px;background:#e6e6e6;"></div>
<div style="left:462px;top:594px;width:2px;height:6px;background:#e6e6e6;"></div>
<div style="left:13px;top:639px;width:1px;height:10px;background:#7a7a7a;"></div>
<div style="left:13px;top:649px;width:11px;height:1px;background:#7a7a7a;"></div>
<svg style="left:1895px;top:204px" width="10" height="6" viewBox="0 0 10 6"><path d="M1 5 L5 1 L9 5" fill="none" stroke="#e6e6e6" stroke-width="1.8"/></svg>
<svg style="left:1895px;top:932px" width="10" height="6" viewBox="0 0 10 6"><path d="M1 1 L5 5 L9 1" fill="none" stroke="#e6e6e6" stroke-width="1.8"/></svg>
<svg style="left:482px;top:944px" width="6" height="10" viewBox="0 0 6 10"><path d="M5 1 L1 5 L5 9" fill="none" stroke="#e6e6e6" stroke-width="1.8"/></svg>
<svg style="left:1883px;top:944px" width="6" height="10" viewBox="0 0 6 10"><path d="M1 1 L5 5 L1 9" fill="none" stroke="#e6e6e6" stroke-width="1.8"/></svg>
<svg style="left:482px;top:973px" width="14" height="17" viewBox="0 0 14 17"><path d="M0 0 H7 V3 H3 V6 H6 V9 H3 V16 H0Z" fill="#e01818"/><g transform="translate(9,10.5)"><circle r="3.4" fill="#4a7cc0"/><g fill="#4a7cc0"><rect x="-0.9" y="-4.8" width="1.8" height="2.2" transform="rotate(0)"/><rect x="-0.9" y="-4.8" width="1.8" height="2.2" transform="rotate(45)"/><rect x="-0.9" y="-4.8" width="1.8" height="2.2" transform="rotate(90)"/><rect x="-0.9" y="-4.8" width="1.8" height="2.2" transform="rotate(135)"/><rect x="-0.9" y="-4.8" width="1.8" height="2.2" transform="rotate(180)"/><rect x="-0.9" y="-4.8" width="1.8" height="2.2" transform="rotate(225)"/><rect x="-0.9" y="-4.8" width="1.8" height="2.2" transform="rotate(270)"/><rect x="-0.9" y="-4.8" width="1.8" height="2.2" transform="rotate(315)"/></g><circle r="1.2" fill="#333"/></g></svg>
<svg style="left:796px;top:976px" width="10" height="10" viewBox="0 0 10 10"><path d="M0.5 0.5 L9.5 9.5 M9.5 0.5 L0.5 9.5" stroke="#8a8a8a" stroke-width="1.5"/></svg>
<svg style="left:929px;top:976px" width="10" height="10" viewBox="0 0 10 10"><path d="M0.5 0.5 L9.5 9.5 M9.5 0.5 L0.5 9.5" stroke="#8a8a8a" stroke-width="1.5"/></svg>
<svg style="left:828px;top:974px" width="14" height="11" viewBox="0 0 14 11"><rect x="0" y="0" width="3" height="2" fill="#f0f0f0"/><rect x="5" y="0" width="9" height="2" fill="#f0f0f0"/><rect x="0" y="3" width="3" height="2" fill="#f0f0f0"/><rect x="5" y="3" width="9" height="2" fill="#f0f0f0"/><rect x="0" y="6" width="3" height="2" fill="#f0f0f0"/><rect x="5" y="6" width="9" height="2" fill="#f0f0f0"/><rect x="0" y="9" width="3" height="2" fill="#f0f0f0"/><rect x="5" y="9" width="9" height="2" fill="#f0f0f0"/></svg>
<svg style="left:1654px;top:1007px" width="10" height="14" viewBox="0 0 10 14"><rect x="1" y="1" width="8" height="12" rx="4" fill="none" stroke="#1c2a40" stroke-width="1.6"/><path d="M5 1 V6 M1 6 H9" stroke="#1c2a40" stroke-width="1.2"/></svg>
<svg style="left:1899px;top:1016px" width="10" height="5" viewBox="0 0 10 5"><path d="M0 0 H10 L5 5Z" fill="#f0f0f0"/></svg>
<div style="left:627px;top:134px;width:1px;height:25px;background:#8c8c8c;"></div>
</body></html>
